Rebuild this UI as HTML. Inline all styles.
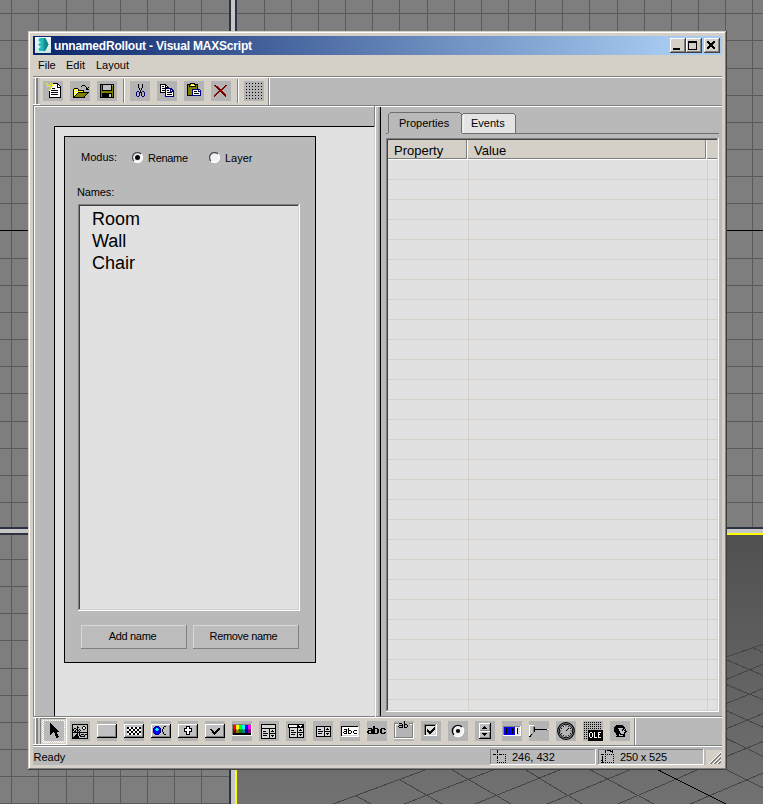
<!DOCTYPE html>
<html><head><meta charset="utf-8"><style>
html,body{margin:0;padding:0;}
body{width:763px;height:804px;overflow:hidden;position:relative;font-family:"Liberation Sans",sans-serif;}
body div{position:absolute;}
.t{white-space:nowrap;line-height:1;}
</style></head><body>
<svg width="763" height="804" style="position:absolute;left:0;top:0" shape-rendering="crispEdges">
<rect x="0" y="0" width="763" height="804" fill="#7e7e7e"/>
<rect x="11" y="0" width="1" height="527" fill="#5a5a5a"/>
<rect x="38" y="0" width="1" height="527" fill="#5a5a5a"/>
<rect x="66" y="0" width="1" height="527" fill="#5a5a5a"/>
<rect x="93" y="0" width="1" height="527" fill="#5a5a5a"/>
<rect x="120" y="0" width="1" height="527" fill="#5a5a5a"/>
<rect x="147" y="0" width="1" height="527" fill="#5a5a5a"/>
<rect x="174" y="0" width="1" height="527" fill="#5a5a5a"/>
<rect x="201" y="0" width="1" height="527" fill="#5a5a5a"/>
<rect x="0" y="13" width="229" height="1" fill="#5a5a5a"/>
<rect x="0" y="40" width="229" height="1" fill="#5a5a5a"/>
<rect x="0" y="68" width="229" height="1" fill="#5a5a5a"/>
<rect x="0" y="95" width="229" height="1" fill="#5a5a5a"/>
<rect x="0" y="122" width="229" height="1" fill="#5a5a5a"/>
<rect x="0" y="149" width="229" height="1" fill="#5a5a5a"/>
<rect x="0" y="176" width="229" height="1" fill="#5a5a5a"/>
<rect x="0" y="203" width="229" height="1" fill="#5a5a5a"/>
<rect x="0" y="230" width="229" height="1" fill="#000"/>
<rect x="0" y="258" width="229" height="1" fill="#5a5a5a"/>
<rect x="0" y="285" width="229" height="1" fill="#5a5a5a"/>
<rect x="0" y="312" width="229" height="1" fill="#5a5a5a"/>
<rect x="0" y="339" width="229" height="1" fill="#5a5a5a"/>
<rect x="0" y="366" width="229" height="1" fill="#5a5a5a"/>
<rect x="0" y="393" width="229" height="1" fill="#5a5a5a"/>
<rect x="0" y="421" width="229" height="1" fill="#5a5a5a"/>
<rect x="0" y="448" width="229" height="1" fill="#5a5a5a"/>
<rect x="0" y="475" width="229" height="1" fill="#5a5a5a"/>
<rect x="0" y="502" width="229" height="1" fill="#5a5a5a"/>
<rect x="264" y="0" width="1" height="527" fill="#5a5a5a"/>
<rect x="291" y="0" width="1" height="527" fill="#5a5a5a"/>
<rect x="318" y="0" width="1" height="527" fill="#5a5a5a"/>
<rect x="345" y="0" width="1" height="527" fill="#5a5a5a"/>
<rect x="372" y="0" width="1" height="527" fill="#5a5a5a"/>
<rect x="399" y="0" width="1" height="527" fill="#5a5a5a"/>
<rect x="427" y="0" width="1" height="527" fill="#5a5a5a"/>
<rect x="454" y="0" width="1" height="527" fill="#5a5a5a"/>
<rect x="481" y="0" width="1" height="527" fill="#5a5a5a"/>
<rect x="508" y="0" width="1" height="527" fill="#5a5a5a"/>
<rect x="535" y="0" width="1" height="527" fill="#5a5a5a"/>
<rect x="562" y="0" width="1" height="527" fill="#5a5a5a"/>
<rect x="589" y="0" width="1" height="527" fill="#5a5a5a"/>
<rect x="617" y="0" width="1" height="527" fill="#5a5a5a"/>
<rect x="644" y="0" width="1" height="527" fill="#5a5a5a"/>
<rect x="671" y="0" width="1" height="527" fill="#5a5a5a"/>
<rect x="698" y="0" width="1" height="527" fill="#5a5a5a"/>
<rect x="725" y="0" width="1" height="527" fill="#5a5a5a"/>
<rect x="752" y="0" width="1" height="527" fill="#5a5a5a"/>
<rect x="237" y="13" width="526" height="1" fill="#5a5a5a"/>
<rect x="237" y="40" width="526" height="1" fill="#5a5a5a"/>
<rect x="237" y="68" width="526" height="1" fill="#5a5a5a"/>
<rect x="237" y="95" width="526" height="1" fill="#5a5a5a"/>
<rect x="237" y="122" width="526" height="1" fill="#5a5a5a"/>
<rect x="237" y="149" width="526" height="1" fill="#5a5a5a"/>
<rect x="237" y="176" width="526" height="1" fill="#5a5a5a"/>
<rect x="237" y="203" width="526" height="1" fill="#5a5a5a"/>
<rect x="237" y="230" width="526" height="1" fill="#000"/>
<rect x="237" y="258" width="526" height="1" fill="#5a5a5a"/>
<rect x="237" y="285" width="526" height="1" fill="#5a5a5a"/>
<rect x="237" y="312" width="526" height="1" fill="#5a5a5a"/>
<rect x="237" y="339" width="526" height="1" fill="#5a5a5a"/>
<rect x="237" y="366" width="526" height="1" fill="#5a5a5a"/>
<rect x="237" y="393" width="526" height="1" fill="#5a5a5a"/>
<rect x="237" y="421" width="526" height="1" fill="#5a5a5a"/>
<rect x="237" y="448" width="526" height="1" fill="#5a5a5a"/>
<rect x="237" y="475" width="526" height="1" fill="#5a5a5a"/>
<rect x="237" y="502" width="526" height="1" fill="#5a5a5a"/>
<rect x="11" y="535" width="1" height="269" fill="#5a5a5a"/>
<rect x="38" y="535" width="1" height="269" fill="#5a5a5a"/>
<rect x="66" y="535" width="1" height="269" fill="#5a5a5a"/>
<rect x="93" y="535" width="1" height="269" fill="#5a5a5a"/>
<rect x="120" y="535" width="1" height="269" fill="#5a5a5a"/>
<rect x="147" y="535" width="1" height="269" fill="#5a5a5a"/>
<rect x="174" y="535" width="1" height="269" fill="#5a5a5a"/>
<rect x="201" y="535" width="1" height="269" fill="#5a5a5a"/>
<rect x="0" y="559" width="229" height="1" fill="#5a5a5a"/>
<rect x="0" y="586" width="229" height="1" fill="#5a5a5a"/>
<rect x="0" y="613" width="229" height="1" fill="#5a5a5a"/>
<rect x="0" y="640" width="229" height="1" fill="#5a5a5a"/>
<rect x="0" y="668" width="229" height="1" fill="#5a5a5a"/>
<rect x="0" y="695" width="229" height="1" fill="#5a5a5a"/>
<rect x="0" y="722" width="229" height="1" fill="#5a5a5a"/>
<rect x="0" y="749" width="229" height="1" fill="#5a5a5a"/>
<rect x="0" y="776" width="229" height="1" fill="#5a5a5a"/>
<rect x="0" y="803" width="229" height="1" fill="#5a5a5a"/>
<defs><linearGradient id="pg" x1="0" y1="0" x2="0" y2="1"><stop offset="0" stop-color="#505050"/><stop offset="1" stop-color="#727272"/></linearGradient></defs>
<rect x="237" y="535" width="526" height="269" fill="url(#pg)"/>
</svg>
<svg width="763" height="804" style="position:absolute;left:0;top:0">
<line x1="333.2" y1="804" x2="425.1" y2="770" stroke="#454545" stroke-width="1" shape-rendering="crispEdges"/>
<line x1="404" y1="804" x2="493" y2="770" stroke="#454545" stroke-width="1" shape-rendering="crispEdges"/>
<line x1="474.9" y1="804" x2="562" y2="769" stroke="#454545" stroke-width="1" shape-rendering="crispEdges"/>
<line x1="547.4" y1="804" x2="629.6" y2="770" stroke="#454545" stroke-width="1" shape-rendering="crispEdges"/>
<line x1="618" y1="804" x2="697.3" y2="770" stroke="#454545" stroke-width="1" shape-rendering="crispEdges"/>
<line x1="690.1" y1="804" x2="763" y2="773" stroke="#454545" stroke-width="1" shape-rendering="crispEdges"/>
<line x1="727" y1="656.7" x2="763" y2="644.3" stroke="#454545" stroke-width="1" shape-rendering="crispEdges"/>
<line x1="727" y1="679.2" x2="763" y2="664.2" stroke="#454545" stroke-width="1" shape-rendering="crispEdges"/>
<line x1="727" y1="703.4" x2="763" y2="688.5" stroke="#454545" stroke-width="1" shape-rendering="crispEdges"/>
<line x1="727" y1="728.5" x2="763" y2="713.6" stroke="#454545" stroke-width="1" shape-rendering="crispEdges"/>
<line x1="727" y1="756.3" x2="763" y2="741.4" stroke="#454545" stroke-width="1" shape-rendering="crispEdges"/>
<line x1="355.8" y1="795.6" x2="370.8" y2="804" stroke="#454545" stroke-width="1" shape-rendering="crispEdges"/>
<line x1="399.5" y1="779.5" x2="441.7" y2="804" stroke="#454545" stroke-width="1" shape-rendering="crispEdges"/>
<line x1="452.2" y1="770" x2="511" y2="804" stroke="#454545" stroke-width="1" shape-rendering="crispEdges"/>
<line x1="525.8" y1="770" x2="582" y2="804" stroke="#454545" stroke-width="1" shape-rendering="crispEdges"/>
<line x1="590.6" y1="770" x2="654" y2="804" stroke="#454545" stroke-width="1" shape-rendering="crispEdges"/>
<line x1="727" y1="770" x2="763" y2="788" stroke="#454545" stroke-width="1" shape-rendering="crispEdges"/>
<line x1="727" y1="659.9" x2="763" y2="675.4" stroke="#454545" stroke-width="1" shape-rendering="crispEdges"/>
<line x1="727" y1="684.8" x2="763" y2="699.7" stroke="#454545" stroke-width="1" shape-rendering="crispEdges"/>
<line x1="727" y1="711" x2="763" y2="727.2" stroke="#454545" stroke-width="1" shape-rendering="crispEdges"/>
<line x1="727" y1="738.8" x2="763" y2="756.3" stroke="#454545" stroke-width="1" shape-rendering="crispEdges"/>
<line x1="752" y1="647.5" x2="763" y2="652.3" stroke="#454545" stroke-width="1" shape-rendering="crispEdges"/>
<line x1="658.4" y1="770" x2="726.2" y2="804" stroke="#000" stroke-width="1" shape-rendering="crispEdges"/>
</svg>
<div style="left:229px;top:0px;width:2px;height:804px;background:#2b3342;"></div>
<div style="left:231px;top:0px;width:4px;height:804px;background:#c6c6c6;"></div>
<div style="left:235px;top:0px;width:2px;height:535px;background:#2b3342;"></div>
<div style="left:0px;top:527px;width:763px;height:2px;background:#2b3342;"></div>
<div style="left:0px;top:529px;width:763px;height:4px;background:#c6c6c6;"></div>
<div style="left:0px;top:533px;width:231px;height:2px;background:#2b3342;"></div>
<div style="left:237px;top:533px;width:526px;height:2px;background:#ffff00;"></div>
<div style="left:235px;top:533px;width:2px;height:271px;background:#ffff00;"></div>
<div style="left:28px;top:31px;width:699px;height:739px;background:#d4d0c8;"></div>
<div style="left:29px;top:32px;width:696px;height:1px;background:#fff;"></div>
<div style="left:29px;top:32px;width:1px;height:736px;background:#fff;"></div>
<div style="left:725px;top:32px;width:1px;height:737px;background:#808080;"></div>
<div style="left:726px;top:31px;width:1px;height:739px;background:#404040;"></div>
<div style="left:29px;top:768px;width:697px;height:1px;background:#808080;"></div>
<div style="left:28px;top:769px;width:699px;height:1px;background:#404040;"></div>
<div style="left:33px;top:36px;width:689px;height:19px;background:;background:linear-gradient(to right,#0a246a 0px,#a6caf0 637px)"></div>
<svg style="position:absolute;left:35px;top:37px" width="16" height="16"><defs><linearGradient id="ig" x1="0" y1="0" x2="0" y2="1"><stop offset="0" stop-color="#f2f8f8"/><stop offset="0.8" stop-color="#d8ecec"/><stop offset="1" stop-color="#bfe6e2"/></linearGradient><linearGradient id="ic" x1="0" y1="0" x2="1" y2="0"><stop offset="0" stop-color="#22c4c4"/><stop offset="0.45" stop-color="#1ab4b4"/><stop offset="0.6" stop-color="#0f8f8f"/><stop offset="1" stop-color="#0c8080"/></linearGradient></defs><rect width="16" height="16" fill="url(#ig)"/><path d="M3.6 2.6 Q3.6 1 5.2 1 L10.6 1 L13.6 7.5 L10.2 14 L5.2 14 Q3.6 14 3.6 12.4 L3.6 11.6 L6.1 9.8 L3.6 8.6 L3.6 6.6 L6.1 5.6 L3.6 4.2 Z" fill="url(#ic)"/></svg>
<div class="t" style="left:54px;top:39.84px;font-size:12px;color:#fff;font-weight:700;letter-spacing:-0.2px">unnamedRollout - Visual MAXScript</div>
<div style="left:670px;top:38px;width:16px;height:15px;background:#d4d0c8;box-shadow:inset -1px -1px #404040, inset 1px 1px #fff, inset -2px -2px #808080"></div><div style="left:673px;top:48px;width:7px;height:2px;background:#000;"></div>
<div style="left:686px;top:38px;width:16px;height:15px;background:#d4d0c8;box-shadow:inset -1px -1px #404040, inset 1px 1px #fff, inset -2px -2px #808080"></div><div style="left:688px;top:41px;width:9px;height:9px;box-sizing:border-box;border:1px solid #000;border-top-width:2px"></div>
<div style="left:704px;top:38px;width:16px;height:15px;background:#d4d0c8;box-shadow:inset -1px -1px #404040, inset 1px 1px #fff, inset -2px -2px #808080"></div><svg style="position:absolute;left:707px;top:41px" width="8" height="8" shape-rendering="crispEdges"><rect x="0" y="0" width="2" height="1" fill="#000000"/><rect x="6" y="0" width="2" height="1" fill="#000000"/><rect x="0" y="1" width="3" height="1" fill="#000000"/><rect x="5" y="1" width="3" height="1" fill="#000000"/><rect x="1" y="2" width="6" height="1" fill="#000000"/><rect x="2" y="3" width="4" height="1" fill="#000000"/><rect x="2" y="4" width="4" height="1" fill="#000000"/><rect x="1" y="5" width="6" height="1" fill="#000000"/><rect x="0" y="6" width="3" height="1" fill="#000000"/><rect x="5" y="6" width="3" height="1" fill="#000000"/><rect x="0" y="7" width="2" height="1" fill="#000000"/><rect x="6" y="7" width="2" height="1" fill="#000000"/></svg>
<div class="t" style="left:38px;top:59.69px;font-size:11px;color:#000;font-weight:400;">File</div>
<div class="t" style="left:66px;top:59.69px;font-size:11px;color:#000;font-weight:400;">Edit</div>
<div class="t" style="left:96px;top:59.69px;font-size:11px;color:#000;font-weight:400;">Layout</div>
<div style="left:33px;top:76px;width:689px;height:1px;background:#808080;"></div>
<div style="left:33px;top:77px;width:689px;height:1px;background:#fff;"></div>
<div style="left:270px;top:78px;width:452px;height:27px;background:#b9b9b9;"></div>
<div style="left:268px;top:78px;width:1px;height:27px;background:#808080;"></div>
<div style="left:269px;top:78px;width:1px;height:27px;background:#fff;"></div>
<div style="left:33px;top:78px;width:2px;height:26px;background:#b8b8b8;"></div>
<div style="left:35px;top:78px;width:1px;height:26px;background:#fff;"></div>
<div style="left:36px;top:78px;width:2px;height:26px;background:#808080;"></div>
<div style="left:38px;top:78px;width:2px;height:26px;background:#c4c4c4;"></div>
<div style="left:33px;top:104px;width:7px;height:1px;background:#fff;"></div>
<div style="left:43px;top:81px;width:20px;height:20px;background:#b4b4b4;"></div>
<svg style="position:absolute;left:43px;top:81px" width="20" height="20" shape-rendering="crispEdges"><rect x="3" y="2" width="1" height="1" fill="#ffff00"/><rect x="7" y="2" width="1" height="1" fill="#ffff00"/><rect x="10" y="2" width="5" height="1" fill="#000000"/><rect x="4" y="3" width="1" height="1" fill="#ffff00"/><rect x="9" y="3" width="1" height="1" fill="#ffff00"/><rect x="10" y="3" width="4" height="1" fill="#ffffff"/><rect x="14" y="3" width="2" height="1" fill="#000000"/><rect x="5" y="4" width="1" height="1" fill="#ffff00"/><rect x="7" y="4" width="1" height="1" fill="#ffff00"/><rect x="9" y="4" width="1" height="1" fill="#ffff00"/><rect x="10" y="4" width="4" height="1" fill="#ffffff"/><rect x="14" y="4" width="1" height="1" fill="#000000"/><rect x="15" y="4" width="1" height="1" fill="#ffffff"/><rect x="16" y="4" width="1" height="1" fill="#000000"/><rect x="4" y="5" width="1" height="1" fill="#ffff00"/><rect x="6" y="5" width="1" height="1" fill="#ffff00"/><rect x="9" y="5" width="5" height="1" fill="#ffffff"/><rect x="14" y="5" width="1" height="1" fill="#000000"/><rect x="15" y="5" width="2" height="1" fill="#ffffff"/><rect x="17" y="5" width="1" height="1" fill="#000000"/><rect x="7" y="6" width="2" height="1" fill="#ffff00"/><rect x="9" y="6" width="5" height="1" fill="#ffffff"/><rect x="14" y="6" width="4" height="1" fill="#000000"/><rect x="8" y="7" width="1" height="1" fill="#ffffff"/><rect x="9" y="7" width="3" height="1" fill="#000000"/><rect x="12" y="7" width="5" height="1" fill="#ffffff"/><rect x="17" y="7" width="1" height="1" fill="#000000"/><rect x="7" y="8" width="1" height="1" fill="#ffff00"/><rect x="8" y="8" width="9" height="1" fill="#ffffff"/><rect x="17" y="8" width="1" height="1" fill="#000000"/><rect x="6" y="9" width="2" height="1" fill="#ffffff"/><rect x="8" y="9" width="7" height="1" fill="#000000"/><rect x="15" y="9" width="2" height="1" fill="#ffffff"/><rect x="17" y="9" width="1" height="1" fill="#000000"/><rect x="6" y="10" width="1" height="1" fill="#000000"/><rect x="7" y="10" width="10" height="1" fill="#ffffff"/><rect x="17" y="10" width="1" height="1" fill="#000000"/><rect x="6" y="11" width="1" height="1" fill="#000000"/><rect x="7" y="11" width="1" height="1" fill="#ffffff"/><rect x="8" y="11" width="7" height="1" fill="#000000"/><rect x="15" y="11" width="2" height="1" fill="#ffffff"/><rect x="17" y="11" width="1" height="1" fill="#000000"/><rect x="6" y="12" width="1" height="1" fill="#000000"/><rect x="7" y="12" width="10" height="1" fill="#ffffff"/><rect x="17" y="12" width="1" height="1" fill="#000000"/><rect x="6" y="13" width="1" height="1" fill="#000000"/><rect x="7" y="13" width="1" height="1" fill="#ffffff"/><rect x="8" y="13" width="7" height="1" fill="#000000"/><rect x="15" y="13" width="2" height="1" fill="#ffffff"/><rect x="17" y="13" width="1" height="1" fill="#000000"/><rect x="6" y="14" width="1" height="1" fill="#000000"/><rect x="7" y="14" width="10" height="1" fill="#ffffff"/><rect x="17" y="14" width="1" height="1" fill="#000000"/><rect x="6" y="15" width="1" height="1" fill="#000000"/><rect x="7" y="15" width="10" height="1" fill="#ffffff"/><rect x="17" y="15" width="1" height="1" fill="#000000"/><rect x="6" y="16" width="12" height="1" fill="#000000"/></svg>
<div style="left:70px;top:81px;width:20px;height:20px;background:#b4b4b4;"></div>
<svg style="position:absolute;left:70px;top:81px" width="20" height="20" shape-rendering="crispEdges"><rect x="12" y="4" width="3" height="1" fill="#000000"/><rect x="11" y="5" width="1" height="1" fill="#000000"/><rect x="15" y="5" width="1" height="1" fill="#000000"/><rect x="16" y="6" width="1" height="1" fill="#000000"/><rect x="18" y="6" width="1" height="1" fill="#000000"/><rect x="4" y="7" width="4" height="1" fill="#000000"/><rect x="16" y="7" width="2" height="1" fill="#000000"/><rect x="3" y="8" width="1" height="1" fill="#000000"/><rect x="4" y="8" width="1" height="1" fill="#ffff00"/><rect x="5" y="8" width="1" height="1" fill="#ffffff"/><rect x="6" y="8" width="1" height="1" fill="#ffff00"/><rect x="7" y="8" width="1" height="1" fill="#ffffff"/><rect x="8" y="8" width="1" height="1" fill="#000000"/><rect x="16" y="8" width="3" height="1" fill="#000000"/><rect x="3" y="9" width="1" height="1" fill="#000000"/><rect x="4" y="9" width="1" height="1" fill="#ffffff"/><rect x="5" y="9" width="1" height="1" fill="#ffff00"/><rect x="6" y="9" width="1" height="1" fill="#ffffff"/><rect x="7" y="9" width="1" height="1" fill="#ffff00"/><rect x="8" y="9" width="6" height="1" fill="#000000"/><rect x="3" y="10" width="1" height="1" fill="#000000"/><rect x="4" y="10" width="1" height="1" fill="#ffff00"/><rect x="5" y="10" width="1" height="1" fill="#ffffff"/><rect x="6" y="10" width="1" height="1" fill="#ffff00"/><rect x="7" y="10" width="1" height="1" fill="#ffffff"/><rect x="8" y="10" width="1" height="1" fill="#ffff00"/><rect x="9" y="10" width="1" height="1" fill="#ffffff"/><rect x="10" y="10" width="1" height="1" fill="#ffff00"/><rect x="11" y="10" width="1" height="1" fill="#ffffff"/><rect x="12" y="10" width="1" height="1" fill="#ffff00"/><rect x="13" y="10" width="1" height="1" fill="#000000"/><rect x="3" y="11" width="1" height="1" fill="#000000"/><rect x="4" y="11" width="1" height="1" fill="#ffffff"/><rect x="5" y="11" width="1" height="1" fill="#ffff00"/><rect x="6" y="11" width="1" height="1" fill="#ffffff"/><rect x="7" y="11" width="1" height="1" fill="#ffff00"/><rect x="8" y="11" width="11" height="1" fill="#000000"/><rect x="3" y="12" width="1" height="1" fill="#000000"/><rect x="4" y="12" width="1" height="1" fill="#ffff00"/><rect x="5" y="12" width="1" height="1" fill="#ffffff"/><rect x="6" y="12" width="1" height="1" fill="#ffff00"/><rect x="7" y="12" width="1" height="1" fill="#000000"/><rect x="8" y="12" width="9" height="1" fill="#808000"/><rect x="17" y="12" width="1" height="1" fill="#000000"/><rect x="3" y="13" width="1" height="1" fill="#000000"/><rect x="4" y="13" width="1" height="1" fill="#ffffff"/><rect x="5" y="13" width="1" height="1" fill="#ffff00"/><rect x="6" y="13" width="1" height="1" fill="#000000"/><rect x="7" y="13" width="9" height="1" fill="#808000"/><rect x="16" y="13" width="1" height="1" fill="#000000"/><rect x="3" y="14" width="1" height="1" fill="#000000"/><rect x="4" y="14" width="1" height="1" fill="#ffff00"/><rect x="5" y="14" width="1" height="1" fill="#000000"/><rect x="6" y="14" width="9" height="1" fill="#808000"/><rect x="15" y="14" width="1" height="1" fill="#000000"/><rect x="3" y="15" width="2" height="1" fill="#000000"/><rect x="5" y="15" width="9" height="1" fill="#808000"/><rect x="14" y="15" width="1" height="1" fill="#000000"/><rect x="3" y="16" width="12" height="1" fill="#000000"/></svg>
<div style="left:97px;top:81px;width:20px;height:20px;background:#b4b4b4;"></div>
<svg style="position:absolute;left:97px;top:81px" width="20" height="20" shape-rendering="crispEdges"><rect x="3" y="3" width="14" height="1" fill="#000000"/><rect x="3" y="4" width="1" height="1" fill="#000000"/><rect x="4" y="4" width="1" height="1" fill="#808000"/><rect x="5" y="4" width="1" height="1" fill="#000000"/><rect x="6" y="4" width="8" height="1" fill="#c0c0c0"/><rect x="14" y="4" width="1" height="1" fill="#000000"/><rect x="15" y="4" width="1" height="1" fill="#c0c0c0"/><rect x="16" y="4" width="1" height="1" fill="#000000"/><rect x="3" y="5" width="1" height="1" fill="#000000"/><rect x="4" y="5" width="1" height="1" fill="#808000"/><rect x="5" y="5" width="1" height="1" fill="#000000"/><rect x="6" y="5" width="8" height="1" fill="#c0c0c0"/><rect x="14" y="5" width="1" height="1" fill="#000000"/><rect x="15" y="5" width="1" height="1" fill="#808000"/><rect x="16" y="5" width="1" height="1" fill="#000000"/><rect x="3" y="6" width="1" height="1" fill="#000000"/><rect x="4" y="6" width="1" height="1" fill="#808000"/><rect x="5" y="6" width="1" height="1" fill="#000000"/><rect x="6" y="6" width="8" height="1" fill="#c0c0c0"/><rect x="14" y="6" width="1" height="1" fill="#000000"/><rect x="15" y="6" width="1" height="1" fill="#808000"/><rect x="16" y="6" width="1" height="1" fill="#000000"/><rect x="3" y="7" width="1" height="1" fill="#000000"/><rect x="4" y="7" width="1" height="1" fill="#808000"/><rect x="5" y="7" width="1" height="1" fill="#000000"/><rect x="6" y="7" width="8" height="1" fill="#c0c0c0"/><rect x="14" y="7" width="1" height="1" fill="#000000"/><rect x="15" y="7" width="1" height="1" fill="#808000"/><rect x="16" y="7" width="1" height="1" fill="#000000"/><rect x="3" y="8" width="1" height="1" fill="#000000"/><rect x="4" y="8" width="1" height="1" fill="#808000"/><rect x="5" y="8" width="1" height="1" fill="#000000"/><rect x="6" y="8" width="8" height="1" fill="#c0c0c0"/><rect x="14" y="8" width="1" height="1" fill="#000000"/><rect x="15" y="8" width="1" height="1" fill="#808000"/><rect x="16" y="8" width="1" height="1" fill="#000000"/><rect x="3" y="9" width="1" height="1" fill="#000000"/><rect x="4" y="9" width="1" height="1" fill="#808000"/><rect x="5" y="9" width="10" height="1" fill="#000000"/><rect x="15" y="9" width="1" height="1" fill="#808000"/><rect x="16" y="9" width="1" height="1" fill="#000000"/><rect x="3" y="10" width="1" height="1" fill="#000000"/><rect x="4" y="10" width="12" height="1" fill="#808000"/><rect x="16" y="10" width="1" height="1" fill="#000000"/><rect x="3" y="11" width="1" height="1" fill="#000000"/><rect x="4" y="11" width="12" height="1" fill="#808000"/><rect x="16" y="11" width="1" height="1" fill="#000000"/><rect x="3" y="12" width="1" height="1" fill="#000000"/><rect x="4" y="12" width="1" height="1" fill="#808000"/><rect x="5" y="12" width="10" height="1" fill="#000000"/><rect x="15" y="12" width="1" height="1" fill="#808000"/><rect x="16" y="12" width="1" height="1" fill="#000000"/><rect x="3" y="13" width="1" height="1" fill="#000000"/><rect x="4" y="13" width="1" height="1" fill="#808000"/><rect x="5" y="13" width="7" height="1" fill="#000000"/><rect x="12" y="13" width="2" height="1" fill="#c0c0c0"/><rect x="14" y="13" width="1" height="1" fill="#000000"/><rect x="15" y="13" width="1" height="1" fill="#808000"/><rect x="16" y="13" width="1" height="1" fill="#000000"/><rect x="3" y="14" width="1" height="1" fill="#000000"/><rect x="4" y="14" width="1" height="1" fill="#808000"/><rect x="5" y="14" width="7" height="1" fill="#000000"/><rect x="12" y="14" width="2" height="1" fill="#c0c0c0"/><rect x="14" y="14" width="1" height="1" fill="#000000"/><rect x="15" y="14" width="1" height="1" fill="#808000"/><rect x="16" y="14" width="1" height="1" fill="#000000"/><rect x="3" y="15" width="1" height="1" fill="#000000"/><rect x="4" y="15" width="1" height="1" fill="#808000"/><rect x="5" y="15" width="7" height="1" fill="#000000"/><rect x="12" y="15" width="2" height="1" fill="#c0c0c0"/><rect x="14" y="15" width="1" height="1" fill="#000000"/><rect x="15" y="15" width="1" height="1" fill="#808000"/><rect x="16" y="15" width="1" height="1" fill="#000000"/><rect x="3" y="16" width="14" height="1" fill="#000000"/></svg>
<div style="left:130px;top:81px;width:20px;height:20px;background:#b4b4b4;"></div>
<svg style="position:absolute;left:130px;top:81px" width="20" height="20" shape-rendering="crispEdges"><rect x="8" y="3" width="1" height="1" fill="#000000"/><rect x="12" y="3" width="1" height="1" fill="#000000"/><rect x="8" y="4" width="1" height="1" fill="#000000"/><rect x="12" y="4" width="1" height="1" fill="#000000"/><rect x="8" y="5" width="1" height="1" fill="#000000"/><rect x="12" y="5" width="1" height="1" fill="#000000"/><rect x="8" y="6" width="1" height="1" fill="#000000"/><rect x="12" y="6" width="1" height="1" fill="#000000"/><rect x="9" y="7" width="1" height="1" fill="#000000"/><rect x="11" y="7" width="1" height="1" fill="#000000"/><rect x="9" y="8" width="1" height="1" fill="#000000"/><rect x="11" y="8" width="1" height="1" fill="#000000"/><rect x="10" y="9" width="1" height="1" fill="#000000"/><rect x="7" y="10" width="2" height="1" fill="#000080"/><rect x="10" y="10" width="1" height="1" fill="#000000"/><rect x="12" y="10" width="2" height="1" fill="#000080"/><rect x="6" y="11" width="1" height="1" fill="#000080"/><rect x="9" y="11" width="1" height="1" fill="#000080"/><rect x="10" y="11" width="1" height="1" fill="#000000"/><rect x="11" y="11" width="1" height="1" fill="#000080"/><rect x="14" y="11" width="1" height="1" fill="#000080"/><rect x="6" y="12" width="1" height="1" fill="#000080"/><rect x="9" y="12" width="1" height="1" fill="#000080"/><rect x="11" y="12" width="1" height="1" fill="#000080"/><rect x="14" y="12" width="1" height="1" fill="#000080"/><rect x="6" y="13" width="1" height="1" fill="#000080"/><rect x="9" y="13" width="1" height="1" fill="#000080"/><rect x="11" y="13" width="1" height="1" fill="#000080"/><rect x="14" y="13" width="1" height="1" fill="#000080"/><rect x="6" y="14" width="1" height="1" fill="#000080"/><rect x="9" y="14" width="1" height="1" fill="#000080"/><rect x="11" y="14" width="1" height="1" fill="#000080"/><rect x="14" y="14" width="1" height="1" fill="#000080"/><rect x="7" y="15" width="2" height="1" fill="#000080"/><rect x="12" y="15" width="2" height="1" fill="#000080"/></svg>
<div style="left:157px;top:81px;width:20px;height:20px;background:#b4b4b4;"></div>
<svg style="position:absolute;left:157px;top:81px" width="20" height="20" shape-rendering="crispEdges"><rect x="3" y="3" width="6" height="1" fill="#000000"/><rect x="3" y="4" width="1" height="1" fill="#000000"/><rect x="4" y="4" width="4" height="1" fill="#ffffff"/><rect x="8" y="4" width="2" height="1" fill="#000000"/><rect x="3" y="5" width="1" height="1" fill="#000000"/><rect x="4" y="5" width="1" height="1" fill="#ffffff"/><rect x="5" y="5" width="2" height="1" fill="#000000"/><rect x="7" y="5" width="1" height="1" fill="#ffffff"/><rect x="8" y="5" width="1" height="1" fill="#000000"/><rect x="9" y="5" width="1" height="1" fill="#ffffff"/><rect x="10" y="5" width="1" height="1" fill="#000000"/><rect x="3" y="6" width="1" height="1" fill="#000000"/><rect x="4" y="6" width="4" height="1" fill="#ffffff"/><rect x="8" y="6" width="4" height="1" fill="#000000"/><rect x="3" y="7" width="1" height="1" fill="#000000"/><rect x="4" y="7" width="1" height="1" fill="#ffffff"/><rect x="5" y="7" width="4" height="1" fill="#000000"/><rect x="9" y="7" width="6" height="1" fill="#000080"/><rect x="3" y="8" width="1" height="1" fill="#000000"/><rect x="4" y="8" width="4" height="1" fill="#ffffff"/><rect x="8" y="8" width="1" height="1" fill="#000080"/><rect x="9" y="8" width="4" height="1" fill="#ffffff"/><rect x="13" y="8" width="3" height="1" fill="#000080"/><rect x="3" y="9" width="1" height="1" fill="#000000"/><rect x="4" y="9" width="1" height="1" fill="#ffffff"/><rect x="5" y="9" width="3" height="1" fill="#000000"/><rect x="8" y="9" width="1" height="1" fill="#000080"/><rect x="9" y="9" width="1" height="1" fill="#ffffff"/><rect x="10" y="9" width="2" height="1" fill="#000000"/><rect x="12" y="9" width="1" height="1" fill="#ffffff"/><rect x="13" y="9" width="1" height="1" fill="#000080"/><rect x="14" y="9" width="1" height="1" fill="#ffffff"/><rect x="15" y="9" width="2" height="1" fill="#000080"/><rect x="3" y="10" width="1" height="1" fill="#000000"/><rect x="4" y="10" width="4" height="1" fill="#ffffff"/><rect x="8" y="10" width="1" height="1" fill="#000080"/><rect x="9" y="10" width="4" height="1" fill="#ffffff"/><rect x="13" y="10" width="4" height="1" fill="#000080"/><rect x="3" y="11" width="5" height="1" fill="#000000"/><rect x="8" y="11" width="1" height="1" fill="#000080"/><rect x="9" y="11" width="1" height="1" fill="#ffffff"/><rect x="10" y="11" width="5" height="1" fill="#000000"/><rect x="15" y="11" width="1" height="1" fill="#ffffff"/><rect x="16" y="11" width="1" height="1" fill="#000080"/><rect x="8" y="12" width="1" height="1" fill="#000080"/><rect x="9" y="12" width="7" height="1" fill="#ffffff"/><rect x="16" y="12" width="1" height="1" fill="#000080"/><rect x="8" y="13" width="1" height="1" fill="#000080"/><rect x="9" y="13" width="1" height="1" fill="#ffffff"/><rect x="10" y="13" width="5" height="1" fill="#000000"/><rect x="15" y="13" width="1" height="1" fill="#ffffff"/><rect x="16" y="13" width="1" height="1" fill="#000080"/><rect x="8" y="14" width="1" height="1" fill="#000080"/><rect x="9" y="14" width="7" height="1" fill="#ffffff"/><rect x="16" y="14" width="1" height="1" fill="#000080"/><rect x="8" y="15" width="9" height="1" fill="#000080"/></svg>
<div style="left:184px;top:81px;width:20px;height:20px;background:#b4b4b4;"></div>
<svg style="position:absolute;left:184px;top:81px" width="20" height="20" shape-rendering="crispEdges"><rect x="6" y="2" width="5" height="1" fill="#000000"/><rect x="3" y="3" width="4" height="1" fill="#000000"/><rect x="7" y="3" width="3" height="1" fill="#ffff00"/><rect x="10" y="3" width="4" height="1" fill="#000000"/><rect x="3" y="4" width="1" height="1" fill="#000000"/><rect x="4" y="4" width="1" height="1" fill="#808000"/><rect x="5" y="4" width="1" height="1" fill="#000000"/><rect x="6" y="4" width="1" height="1" fill="#ffff00"/><rect x="7" y="4" width="3" height="1" fill="#ffffff"/><rect x="10" y="4" width="1" height="1" fill="#ffff00"/><rect x="11" y="4" width="1" height="1" fill="#000000"/><rect x="12" y="4" width="1" height="1" fill="#808000"/><rect x="13" y="4" width="1" height="1" fill="#000000"/><rect x="3" y="5" width="1" height="1" fill="#000000"/><rect x="4" y="5" width="1" height="1" fill="#808000"/><rect x="5" y="5" width="7" height="1" fill="#000000"/><rect x="12" y="5" width="1" height="1" fill="#808000"/><rect x="13" y="5" width="1" height="1" fill="#000000"/><rect x="3" y="6" width="1" height="1" fill="#000000"/><rect x="4" y="6" width="1" height="1" fill="#808000"/><rect x="5" y="6" width="1" height="1" fill="#808000"/><rect x="6" y="6" width="1" height="1" fill="#808000"/><rect x="7" y="6" width="1" height="1" fill="#808000"/><rect x="8" y="6" width="1" height="1" fill="#808000"/><rect x="9" y="6" width="1" height="1" fill="#808000"/><rect x="10" y="6" width="1" height="1" fill="#808000"/><rect x="11" y="6" width="1" height="1" fill="#808000"/><rect x="12" y="6" width="1" height="1" fill="#808000"/><rect x="13" y="6" width="1" height="1" fill="#000000"/><rect x="3" y="7" width="1" height="1" fill="#000000"/><rect x="4" y="7" width="1" height="1" fill="#808000"/><rect x="5" y="7" width="1" height="1" fill="#808000"/><rect x="6" y="7" width="1" height="1" fill="#808000"/><rect x="7" y="7" width="1" height="1" fill="#808000"/><rect x="8" y="7" width="1" height="1" fill="#808000"/><rect x="9" y="7" width="1" height="1" fill="#808000"/><rect x="10" y="7" width="1" height="1" fill="#808000"/><rect x="11" y="7" width="1" height="1" fill="#808000"/><rect x="12" y="7" width="1" height="1" fill="#808000"/><rect x="13" y="7" width="1" height="1" fill="#000000"/><rect x="3" y="8" width="1" height="1" fill="#000000"/><rect x="4" y="8" width="1" height="1" fill="#808000"/><rect x="5" y="8" width="1" height="1" fill="#808000"/><rect x="6" y="8" width="1" height="1" fill="#808000"/><rect x="7" y="8" width="1" height="1" fill="#808000"/><rect x="8" y="8" width="8" height="1" fill="#000080"/><rect x="3" y="9" width="1" height="1" fill="#000000"/><rect x="4" y="9" width="1" height="1" fill="#808000"/><rect x="5" y="9" width="1" height="1" fill="#808000"/><rect x="6" y="9" width="1" height="1" fill="#808000"/><rect x="7" y="9" width="1" height="1" fill="#808000"/><rect x="8" y="9" width="1" height="1" fill="#000080"/><rect x="9" y="9" width="5" height="1" fill="#ffffff"/><rect x="14" y="9" width="1" height="1" fill="#000080"/><rect x="15" y="9" width="1" height="1" fill="#ffffff"/><rect x="16" y="9" width="1" height="1" fill="#000080"/><rect x="3" y="10" width="1" height="1" fill="#000000"/><rect x="4" y="10" width="1" height="1" fill="#808000"/><rect x="5" y="10" width="1" height="1" fill="#808000"/><rect x="6" y="10" width="1" height="1" fill="#808000"/><rect x="7" y="10" width="1" height="1" fill="#808000"/><rect x="8" y="10" width="1" height="1" fill="#000080"/><rect x="9" y="10" width="1" height="1" fill="#ffffff"/><rect x="10" y="10" width="3" height="1" fill="#000000"/><rect x="13" y="10" width="1" height="1" fill="#ffffff"/><rect x="14" y="10" width="3" height="1" fill="#000080"/><rect x="3" y="11" width="1" height="1" fill="#000000"/><rect x="4" y="11" width="1" height="1" fill="#808000"/><rect x="5" y="11" width="1" height="1" fill="#808000"/><rect x="6" y="11" width="1" height="1" fill="#808000"/><rect x="7" y="11" width="1" height="1" fill="#808000"/><rect x="8" y="11" width="1" height="1" fill="#000080"/><rect x="9" y="11" width="7" height="1" fill="#ffffff"/><rect x="16" y="11" width="1" height="1" fill="#000080"/><rect x="3" y="12" width="1" height="1" fill="#000000"/><rect x="4" y="12" width="1" height="1" fill="#808000"/><rect x="5" y="12" width="1" height="1" fill="#808000"/><rect x="6" y="12" width="1" height="1" fill="#808000"/><rect x="7" y="12" width="1" height="1" fill="#808000"/><rect x="8" y="12" width="1" height="1" fill="#000080"/><rect x="9" y="12" width="1" height="1" fill="#ffffff"/><rect x="10" y="12" width="5" height="1" fill="#000000"/><rect x="15" y="12" width="1" height="1" fill="#ffffff"/><rect x="16" y="12" width="1" height="1" fill="#000080"/><rect x="3" y="13" width="1" height="1" fill="#000000"/><rect x="4" y="13" width="1" height="1" fill="#808000"/><rect x="5" y="13" width="1" height="1" fill="#808000"/><rect x="6" y="13" width="1" height="1" fill="#808000"/><rect x="7" y="13" width="1" height="1" fill="#808000"/><rect x="8" y="13" width="1" height="1" fill="#000080"/><rect x="9" y="13" width="7" height="1" fill="#ffffff"/><rect x="16" y="13" width="1" height="1" fill="#000080"/><rect x="3" y="14" width="5" height="1" fill="#000000"/><rect x="8" y="14" width="9" height="1" fill="#000080"/></svg>
<div style="left:211px;top:81px;width:20px;height:20px;background:#b4b4b4;"></div>
<svg style="position:absolute;left:211px;top:81px" width="20" height="20" shape-rendering="crispEdges"><rect x="3" y="4" width="2" height="1" fill="#800000"/><rect x="14" y="4" width="2" height="1" fill="#800000"/><rect x="4" y="5" width="3" height="1" fill="#800000"/><rect x="13" y="5" width="2" height="1" fill="#800000"/><rect x="5" y="6" width="3" height="1" fill="#800000"/><rect x="12" y="6" width="2" height="1" fill="#800000"/><rect x="6" y="7" width="3" height="1" fill="#800000"/><rect x="11" y="7" width="2" height="1" fill="#800000"/><rect x="7" y="8" width="5" height="1" fill="#800000"/><rect x="8" y="9" width="3" height="1" fill="#800000"/><rect x="7" y="10" width="5" height="1" fill="#800000"/><rect x="6" y="11" width="2" height="1" fill="#800000"/><rect x="10" y="11" width="3" height="1" fill="#800000"/><rect x="5" y="12" width="2" height="1" fill="#800000"/><rect x="11" y="12" width="3" height="1" fill="#800000"/><rect x="4" y="13" width="2" height="1" fill="#800000"/><rect x="12" y="13" width="3" height="1" fill="#800000"/><rect x="3" y="14" width="2" height="1" fill="#800000"/><rect x="13" y="14" width="2" height="1" fill="#800000"/><rect x="3" y="15" width="1" height="1" fill="#800000"/><rect x="14" y="15" width="1" height="1" fill="#800000"/></svg>
<div style="left:244px;top:81px;width:20px;height:20px;background:#b4b4b4;"></div>
<div style="left:123px;top:79px;width:1px;height:24px;background:#808080;"></div>
<div style="left:124px;top:79px;width:1px;height:24px;background:#fff;"></div>
<div style="left:237px;top:79px;width:1px;height:24px;background:#808080;"></div>
<div style="left:238px;top:79px;width:1px;height:24px;background:#fff;"></div>
<svg style="position:absolute;left:244px;top:81px" width="20" height="20" shape-rendering="crispEdges" fill="#000"><rect x="2" y="2" width="1" height="1"/><rect x="2" y="5" width="1" height="1"/><rect x="2" y="8" width="1" height="1"/><rect x="2" y="11" width="1" height="1"/><rect x="2" y="14" width="1" height="1"/><rect x="2" y="17" width="1" height="1"/><rect x="5" y="2" width="1" height="1"/><rect x="5" y="5" width="1" height="1"/><rect x="5" y="8" width="1" height="1"/><rect x="5" y="11" width="1" height="1"/><rect x="5" y="14" width="1" height="1"/><rect x="5" y="17" width="1" height="1"/><rect x="8" y="2" width="1" height="1"/><rect x="8" y="5" width="1" height="1"/><rect x="8" y="8" width="1" height="1"/><rect x="8" y="11" width="1" height="1"/><rect x="8" y="14" width="1" height="1"/><rect x="8" y="17" width="1" height="1"/><rect x="11" y="2" width="1" height="1"/><rect x="11" y="5" width="1" height="1"/><rect x="11" y="8" width="1" height="1"/><rect x="11" y="11" width="1" height="1"/><rect x="11" y="14" width="1" height="1"/><rect x="11" y="17" width="1" height="1"/><rect x="14" y="2" width="1" height="1"/><rect x="14" y="5" width="1" height="1"/><rect x="14" y="8" width="1" height="1"/><rect x="14" y="11" width="1" height="1"/><rect x="14" y="14" width="1" height="1"/><rect x="14" y="17" width="1" height="1"/><rect x="17" y="2" width="1" height="1"/><rect x="17" y="5" width="1" height="1"/><rect x="17" y="8" width="1" height="1"/><rect x="17" y="11" width="1" height="1"/><rect x="17" y="14" width="1" height="1"/><rect x="17" y="17" width="1" height="1"/></svg>
<div style="left:33px;top:105px;width:689px;height:1px;background:#808080;"></div>
<div style="left:34px;top:106px;width:688px;height:1px;background:#fff;"></div>
<div style="left:35px;top:107px;width:339px;height:609px;background:#b9b9b9;"></div>
<div style="left:33px;top:105px;width:1px;height:611px;background:#808080;"></div>
<div style="left:34px;top:106px;width:1px;height:610px;background:#fff;"></div>
<div style="left:374px;top:106px;width:1px;height:21px;background:#808080;"></div>
<div style="left:374px;top:127px;width:1px;height:589px;background:#d4d4d4;"></div>
<div style="left:375px;top:106px;width:1px;height:611px;background:#fff;"></div>
<div style="left:54px;top:126px;width:320px;height:590px;background:#000;"></div>
<div style="left:55px;top:127px;width:319px;height:589px;background:#e1e1e1;"></div>
<div style="left:64px;top:136px;width:252px;height:527px;background:#000;"></div>
<div style="left:65px;top:137px;width:250px;height:525px;background:#b9b9b9;"></div>
<div class="t" style="left:81px;top:151.69px;font-size:11px;color:#000;font-weight:400;">Modus:</div>
<svg style="position:absolute;left:132px;top:152px" width="11" height="11"><circle cx="5.5" cy="5.5" r="5" fill="#f2f2f2"/><path d="M1.96 9.04 A5 5 0 0 1 9.04 1.96" stroke="#4a4e58" stroke-width="1.3" fill="none"/><path d="M9.04 1.96 A5 5 0 0 1 1.96 9.04" stroke="#fff" stroke-width="1.3" fill="none"/><circle cx="5.5" cy="5.5" r="2.5" fill="#000"/></svg>
<div class="t" style="left:148px;top:152.69px;font-size:11px;color:#000;font-weight:400;letter-spacing:-0.3px">Rename</div>
<svg style="position:absolute;left:209px;top:152px" width="11" height="11"><circle cx="5.5" cy="5.5" r="5" fill="#f2f2f2"/><path d="M1.96 9.04 A5 5 0 0 1 9.04 1.96" stroke="#4a4e58" stroke-width="1.3" fill="none"/><path d="M9.04 1.96 A5 5 0 0 1 1.96 9.04" stroke="#fff" stroke-width="1.3" fill="none"/></svg>
<div class="t" style="left:225px;top:152.69px;font-size:11px;color:#000;font-weight:400;">Layer</div>
<div class="t" style="left:77px;top:186.69px;font-size:11px;color:#000;font-weight:400;letter-spacing:-0.13px">Names:</div>
<div style="left:78px;top:204px;width:222px;height:407px;background:#fff;"></div>
<div style="left:78px;top:204px;width:221px;height:406px;background:#808080;"></div>
<div style="left:79px;top:205px;width:220px;height:405px;background:#d4d0c8;"></div>
<div style="left:79px;top:205px;width:219px;height:404px;background:#404040;"></div>
<div style="left:80px;top:206px;width:218px;height:403px;background:#e1e1e1;"></div>
<div class="t" style="left:92px;top:209.76px;font-size:18px;color:#000;font-weight:400;">Room</div>
<div class="t" style="left:92px;top:231.76px;font-size:18px;color:#000;font-weight:400;">Wall</div>
<div class="t" style="left:92px;top:253.76px;font-size:18px;color:#000;font-weight:400;">Chair</div>
<div style="left:81px;top:625px;width:106px;height:24px;background:#bcbcbc;box-shadow:inset -1px -1px #808080, inset 1px 1px #d8d8d8"></div><div class="t" style="left:81px;top:630.69px;font-size:11px;color:#000;font-weight:400;width:106px;text-align:center;letter-spacing:-0.3px;margin-left:-1.5px">Add name</div>
<div style="left:193px;top:625px;width:106px;height:24px;background:#bcbcbc;box-shadow:inset -1px -1px #808080, inset 1px 1px #d8d8d8"></div><div class="t" style="left:193px;top:630.69px;font-size:11px;color:#000;font-weight:400;width:106px;text-align:center;letter-spacing:-0.34px;margin-left:-2.5px">Remove name</div>
<div style="left:376px;top:107px;width:2px;height:610px;background:#c2c2c2;"></div>
<div style="left:378px;top:107px;width:1px;height:610px;background:#b0b0b0;"></div>
<div style="left:379px;top:107px;width:1px;height:610px;background:#989898;"></div>
<div style="left:376px;top:106px;width:4px;height:1px;background:#fff;"></div>
<div style="left:380px;top:107px;width:1px;height:610px;background:#000;"></div>
<div style="left:381px;top:107px;width:341px;height:610px;background:#b9b9b9;"></div>
<div style="left:390px;top:112px;width:70px;height:1px;background:#6e6e6e;"></div>
<div style="left:389px;top:113px;width:1px;height:1px;background:#6e6e6e;"></div>
<div style="left:388px;top:114px;width:1px;height:19px;background:#6e6e6e;"></div>
<div style="left:386px;top:133px;width:2px;height:1px;background:#6e6e6e;"></div>
<div style="left:460px;top:113px;width:1px;height:1px;background:#6e6e6e;"></div>
<div class="t" style="left:399px;top:117.69px;font-size:11px;color:#000;font-weight:400;">Properties</div>
<div style="left:462px;top:114px;width:53px;height:19px;background:#e4e4e4;"></div>
<div style="left:463px;top:114px;width:1px;height:19px;background:#f0f0f0;"></div>
<div style="left:463px;top:113px;width:51px;height:1px;background:#6e6e6e;"></div>
<div style="left:462px;top:114px;width:1px;height:1px;background:#6e6e6e;"></div>
<div style="left:514px;top:114px;width:1px;height:1px;background:#6e6e6e;"></div>
<div style="left:461px;top:114px;width:1px;height:19px;background:#6e6e6e;"></div>
<div style="left:515px;top:115px;width:1px;height:18px;background:#6e6e6e;"></div>
<div style="left:462px;top:133px;width:257px;height:1px;background:#6e6e6e;"></div>
<div class="t" style="left:471px;top:117.69px;font-size:11px;color:#000;font-weight:400;">Events</div>
<div style="left:386px;top:138px;width:333px;height:574px;background:#fff;"></div>
<div style="left:386px;top:138px;width:332px;height:573px;background:#808080;"></div>
<div style="left:387px;top:139px;width:331px;height:572px;background:#d4d0c8;"></div>
<div style="left:387px;top:139px;width:330px;height:571px;background:#404040;"></div>
<div style="left:388px;top:140px;width:329px;height:570px;background:#e1e1e1;"></div>
<div style="left:388px;top:140px;width:329px;height:18px;background:#d4d0c8;"></div>
<div style="left:388px;top:158px;width:329px;height:1px;background:#808080;"></div>
<div style="left:388px;top:159px;width:329px;height:1px;background:#fff;"></div>
<div style="left:466px;top:140px;width:1px;height:19px;background:#808080;"></div>
<div style="left:467px;top:140px;width:1px;height:19px;background:#fff;"></div>
<div style="left:705px;top:140px;width:1px;height:19px;background:#808080;"></div>
<div style="left:706px;top:140px;width:1px;height:19px;background:#fff;"></div>
<div class="t" style="left:394px;top:144.00px;font-size:13px;color:#000;font-weight:400;">Property</div>
<div class="t" style="left:474px;top:144.00px;font-size:13px;color:#000;font-weight:400;">Value</div>
<div style="left:388px;top:179px;width:329px;height:1px;background:#d4d0c8;"></div>
<div style="left:388px;top:199px;width:329px;height:1px;background:#d4d0c8;"></div>
<div style="left:388px;top:219px;width:329px;height:1px;background:#d4d0c8;"></div>
<div style="left:388px;top:239px;width:329px;height:1px;background:#d4d0c8;"></div>
<div style="left:388px;top:259px;width:329px;height:1px;background:#d4d0c8;"></div>
<div style="left:388px;top:279px;width:329px;height:1px;background:#d4d0c8;"></div>
<div style="left:388px;top:299px;width:329px;height:1px;background:#d4d0c8;"></div>
<div style="left:388px;top:319px;width:329px;height:1px;background:#d4d0c8;"></div>
<div style="left:388px;top:339px;width:329px;height:1px;background:#d4d0c8;"></div>
<div style="left:388px;top:359px;width:329px;height:1px;background:#d4d0c8;"></div>
<div style="left:388px;top:379px;width:329px;height:1px;background:#d4d0c8;"></div>
<div style="left:388px;top:399px;width:329px;height:1px;background:#d4d0c8;"></div>
<div style="left:388px;top:419px;width:329px;height:1px;background:#d4d0c8;"></div>
<div style="left:388px;top:439px;width:329px;height:1px;background:#d4d0c8;"></div>
<div style="left:388px;top:459px;width:329px;height:1px;background:#d4d0c8;"></div>
<div style="left:388px;top:479px;width:329px;height:1px;background:#d4d0c8;"></div>
<div style="left:388px;top:499px;width:329px;height:1px;background:#d4d0c8;"></div>
<div style="left:388px;top:519px;width:329px;height:1px;background:#d4d0c8;"></div>
<div style="left:388px;top:539px;width:329px;height:1px;background:#d4d0c8;"></div>
<div style="left:388px;top:559px;width:329px;height:1px;background:#d4d0c8;"></div>
<div style="left:388px;top:579px;width:329px;height:1px;background:#d4d0c8;"></div>
<div style="left:388px;top:599px;width:329px;height:1px;background:#d4d0c8;"></div>
<div style="left:388px;top:619px;width:329px;height:1px;background:#d4d0c8;"></div>
<div style="left:388px;top:639px;width:329px;height:1px;background:#d4d0c8;"></div>
<div style="left:388px;top:659px;width:329px;height:1px;background:#d4d0c8;"></div>
<div style="left:388px;top:679px;width:329px;height:1px;background:#d4d0c8;"></div>
<div style="left:388px;top:699px;width:329px;height:1px;background:#d4d0c8;"></div>
<div style="left:468px;top:160px;width:1px;height:550px;background:#d4d0c8;"></div>
<div style="left:707px;top:160px;width:1px;height:550px;background:#d4d0c8;"></div>
<div style="left:33px;top:716px;width:689px;height:1px;background:#808080;"></div>
<div style="left:375px;top:716px;width:1px;height:1px;background:#fff;"></div>
<div style="left:33px;top:717px;width:689px;height:1px;background:#fff;"></div>
<div style="left:636px;top:718px;width:86px;height:27px;background:#b9b9b9;"></div>
<div style="left:634px;top:718px;width:1px;height:27px;background:#808080;"></div>
<div style="left:635px;top:718px;width:1px;height:27px;background:#fff;"></div>
<div style="left:33px;top:718px;width:2px;height:26px;background:#b8b8b8;"></div>
<div style="left:35px;top:718px;width:1px;height:26px;background:#fff;"></div>
<div style="left:36px;top:718px;width:2px;height:26px;background:#808080;"></div>
<div style="left:38px;top:718px;width:2px;height:26px;background:#c4c4c4;"></div>
<div style="left:33px;top:744px;width:7px;height:1px;background:#fff;"></div>
<div style="left:40px;top:718px;width:27px;height:27px;background:#fff;"></div>
<div style="left:40px;top:718px;width:26px;height:26px;background:#808080;"></div>
<div style="left:41px;top:719px;width:25px;height:25px;background:#d4d0c8;"></div>
<svg style="position:absolute;left:41px;top:719px" width="25" height="25" shape-rendering="crispEdges" fill="#fff"><rect x="2" y="1" width="1" height="1"/><rect x="4" y="1" width="1" height="1"/><rect x="6" y="1" width="1" height="1"/><rect x="8" y="1" width="1" height="1"/><rect x="10" y="1" width="1" height="1"/><rect x="12" y="1" width="1" height="1"/><rect x="14" y="1" width="1" height="1"/><rect x="16" y="1" width="1" height="1"/><rect x="18" y="1" width="1" height="1"/><rect x="20" y="1" width="1" height="1"/><rect x="22" y="1" width="1" height="1"/><rect x="1" y="2" width="1" height="1"/><rect x="23" y="2" width="1" height="1"/><rect x="2" y="3" width="1" height="1"/><rect x="1" y="4" width="1" height="1"/><rect x="23" y="4" width="1" height="1"/><rect x="2" y="5" width="1" height="1"/><rect x="1" y="6" width="1" height="1"/><rect x="23" y="6" width="1" height="1"/><rect x="2" y="7" width="1" height="1"/><rect x="1" y="8" width="1" height="1"/><rect x="23" y="8" width="1" height="1"/><rect x="2" y="9" width="1" height="1"/><rect x="1" y="10" width="1" height="1"/><rect x="23" y="10" width="1" height="1"/><rect x="2" y="11" width="1" height="1"/><rect x="1" y="12" width="1" height="1"/><rect x="23" y="12" width="1" height="1"/><rect x="2" y="13" width="1" height="1"/><rect x="1" y="14" width="1" height="1"/><rect x="23" y="14" width="1" height="1"/><rect x="2" y="15" width="1" height="1"/><rect x="1" y="16" width="1" height="1"/><rect x="23" y="16" width="1" height="1"/><rect x="2" y="17" width="1" height="1"/><rect x="1" y="18" width="1" height="1"/><rect x="23" y="18" width="1" height="1"/><rect x="2" y="19" width="1" height="1"/><rect x="1" y="20" width="1" height="1"/><rect x="23" y="20" width="1" height="1"/><rect x="2" y="21" width="1" height="1"/><rect x="1" y="22" width="1" height="1"/><rect x="3" y="22" width="1" height="1"/><rect x="5" y="22" width="1" height="1"/><rect x="7" y="22" width="1" height="1"/><rect x="9" y="22" width="1" height="1"/><rect x="11" y="22" width="1" height="1"/><rect x="13" y="22" width="1" height="1"/><rect x="15" y="22" width="1" height="1"/><rect x="17" y="22" width="1" height="1"/><rect x="19" y="22" width="1" height="1"/><rect x="21" y="22" width="1" height="1"/><rect x="23" y="22" width="1" height="1"/><rect x="2" y="23" width="1" height="1"/><rect x="4" y="23" width="1" height="1"/><rect x="6" y="23" width="1" height="1"/><rect x="8" y="23" width="1" height="1"/><rect x="10" y="23" width="1" height="1"/><rect x="12" y="23" width="1" height="1"/><rect x="14" y="23" width="1" height="1"/><rect x="16" y="23" width="1" height="1"/><rect x="18" y="23" width="1" height="1"/><rect x="20" y="23" width="1" height="1"/><rect x="22" y="23" width="1" height="1"/></svg>
<div style="left:44px;top:721px;width:20px;height:20px;background:#b9b9b9;"></div>
<svg style="position:absolute;left:50px;top:723px" width="9" height="15" shape-rendering="crispEdges"><rect x="0" y="0" width="1" height="1" fill="#000000"/><rect x="0" y="1" width="2" height="1" fill="#000000"/><rect x="0" y="2" width="3" height="1" fill="#000000"/><rect x="0" y="3" width="4" height="1" fill="#000000"/><rect x="0" y="4" width="5" height="1" fill="#000000"/><rect x="0" y="5" width="6" height="1" fill="#000000"/><rect x="0" y="6" width="7" height="1" fill="#000000"/><rect x="0" y="7" width="8" height="1" fill="#000000"/><rect x="0" y="8" width="9" height="1" fill="#000000"/><rect x="0" y="9" width="3" height="1" fill="#000000"/><rect x="4" y="9" width="3" height="1" fill="#000000"/><rect x="0" y="10" width="2" height="1" fill="#000000"/><rect x="5" y="10" width="2" height="1" fill="#000000"/><rect x="0" y="11" width="1" height="1" fill="#000000"/><rect x="5" y="11" width="3" height="1" fill="#000000"/><rect x="5" y="12" width="3" height="1" fill="#000000"/><rect x="6" y="13" width="3" height="1" fill="#000000"/><rect x="6" y="14" width="2" height="1" fill="#000000"/></svg>
<div style="left:70px;top:721px;width:20px;height:20px;background:#b4b4b4;"></div>
<svg style="position:absolute;left:70px;top:721px" width="20" height="20" shape-rendering="crispEdges"><rect x="2" y="3" width="16" height="1" fill="#000000"/><rect x="2" y="4" width="1" height="1" fill="#000000"/><rect x="3" y="4" width="14" height="1" fill="#c0c0c0"/><rect x="17" y="4" width="1" height="1" fill="#000000"/><rect x="2" y="5" width="1" height="1" fill="#000000"/><rect x="3" y="5" width="4" height="1" fill="#c0c0c0"/><rect x="7" y="5" width="1" height="1" fill="#000000"/><rect x="8" y="5" width="5" height="1" fill="#c0c0c0"/><rect x="13" y="5" width="2" height="1" fill="#000000"/><rect x="15" y="5" width="2" height="1" fill="#c0c0c0"/><rect x="17" y="5" width="1" height="1" fill="#000000"/><rect x="2" y="6" width="1" height="1" fill="#000000"/><rect x="3" y="6" width="4" height="1" fill="#c0c0c0"/><rect x="7" y="6" width="2" height="1" fill="#000000"/><rect x="9" y="6" width="3" height="1" fill="#c0c0c0"/><rect x="12" y="6" width="1" height="1" fill="#000000"/><rect x="13" y="6" width="2" height="1" fill="#ffffff"/><rect x="15" y="6" width="1" height="1" fill="#000000"/><rect x="16" y="6" width="1" height="1" fill="#c0c0c0"/><rect x="17" y="6" width="1" height="1" fill="#000000"/><rect x="2" y="7" width="1" height="1" fill="#000000"/><rect x="3" y="7" width="1" height="1" fill="#c0c0c0"/><rect x="4" y="7" width="2" height="1" fill="#000000"/><rect x="6" y="7" width="1" height="1" fill="#c0c0c0"/><rect x="7" y="7" width="1" height="1" fill="#000000"/><rect x="8" y="7" width="4" height="1" fill="#c0c0c0"/><rect x="12" y="7" width="1" height="1" fill="#000000"/><rect x="13" y="7" width="2" height="1" fill="#ffffff"/><rect x="15" y="7" width="1" height="1" fill="#000000"/><rect x="16" y="7" width="1" height="1" fill="#c0c0c0"/><rect x="17" y="7" width="1" height="1" fill="#000000"/><rect x="2" y="8" width="2" height="1" fill="#000000"/><rect x="4" y="8" width="2" height="1" fill="#c0c0c0"/><rect x="6" y="8" width="2" height="1" fill="#000000"/><rect x="8" y="8" width="1" height="1" fill="#c0c0c0"/><rect x="9" y="8" width="1" height="1" fill="#000000"/><rect x="10" y="8" width="3" height="1" fill="#c0c0c0"/><rect x="13" y="8" width="2" height="1" fill="#000000"/><rect x="15" y="8" width="2" height="1" fill="#c0c0c0"/><rect x="17" y="8" width="1" height="1" fill="#000000"/><rect x="2" y="9" width="2" height="1" fill="#000000"/><rect x="4" y="9" width="1" height="1" fill="#c0c0c0"/><rect x="5" y="9" width="1" height="1" fill="#000000"/><rect x="6" y="9" width="1" height="1" fill="#c0c0c0"/><rect x="7" y="9" width="2" height="1" fill="#000000"/><rect x="9" y="9" width="1" height="1" fill="#c0c0c0"/><rect x="10" y="9" width="1" height="1" fill="#000000"/><rect x="11" y="9" width="6" height="1" fill="#c0c0c0"/><rect x="17" y="9" width="1" height="1" fill="#000000"/><rect x="2" y="10" width="1" height="1" fill="#000000"/><rect x="3" y="10" width="1" height="1" fill="#c0c0c0"/><rect x="4" y="10" width="2" height="1" fill="#000000"/><rect x="6" y="10" width="1" height="1" fill="#c0c0c0"/><rect x="7" y="10" width="1" height="1" fill="#000000"/><rect x="8" y="10" width="1" height="1" fill="#c0c0c0"/><rect x="9" y="10" width="1" height="1" fill="#000000"/><rect x="10" y="10" width="7" height="1" fill="#c0c0c0"/><rect x="17" y="10" width="1" height="1" fill="#000000"/><rect x="2" y="11" width="16" height="1" fill="#000000"/><rect x="2" y="12" width="1" height="1" fill="#000000"/><rect x="3" y="12" width="4" height="1" fill="#c0c0c0"/><rect x="7" y="12" width="1" height="1" fill="#000000"/><rect x="8" y="12" width="1" height="1" fill="#c0c0c0"/><rect x="9" y="12" width="1" height="1" fill="#000000"/><rect x="10" y="12" width="7" height="1" fill="#c0c0c0"/><rect x="17" y="12" width="1" height="1" fill="#000000"/><rect x="2" y="13" width="1" height="1" fill="#000000"/><rect x="3" y="13" width="3" height="1" fill="#c0c0c0"/><rect x="6" y="13" width="2" height="1" fill="#000000"/><rect x="8" y="13" width="1" height="1" fill="#c0c0c0"/><rect x="9" y="13" width="1" height="1" fill="#000000"/><rect x="10" y="13" width="1" height="1" fill="#c0c0c0"/><rect x="11" y="13" width="3" height="1" fill="#000000"/><rect x="14" y="13" width="1" height="1" fill="#c0c0c0"/><rect x="15" y="13" width="3" height="1" fill="#000000"/><rect x="2" y="14" width="1" height="1" fill="#000000"/><rect x="3" y="14" width="2" height="1" fill="#c0c0c0"/><rect x="5" y="14" width="3" height="1" fill="#000000"/><rect x="8" y="14" width="1" height="1" fill="#c0c0c0"/><rect x="9" y="14" width="2" height="1" fill="#000000"/><rect x="11" y="14" width="3" height="1" fill="#c0c0c0"/><rect x="14" y="14" width="1" height="1" fill="#000000"/><rect x="15" y="14" width="2" height="1" fill="#c0c0c0"/><rect x="17" y="14" width="1" height="1" fill="#000000"/><rect x="2" y="15" width="1" height="1" fill="#000000"/><rect x="3" y="15" width="1" height="1" fill="#c0c0c0"/><rect x="4" y="15" width="5" height="1" fill="#000000"/><rect x="9" y="15" width="1" height="1" fill="#c0c0c0"/><rect x="10" y="15" width="5" height="1" fill="#000000"/><rect x="15" y="15" width="2" height="1" fill="#c0c0c0"/><rect x="17" y="15" width="1" height="1" fill="#000000"/><rect x="2" y="16" width="7" height="1" fill="#000000"/><rect x="9" y="16" width="8" height="1" fill="#c0c0c0"/><rect x="17" y="16" width="1" height="1" fill="#000000"/><rect x="2" y="17" width="16" height="1" fill="#000000"/></svg>
<div style="left:97px;top:721px;width:20px;height:20px;background:#b4b4b4;"></div>
<svg style="position:absolute;left:97px;top:721px" width="20" height="20" shape-rendering="crispEdges"><rect x="0" y="3" width="19" height="1" fill="#ffffff"/><rect x="19" y="3" width="1" height="1" fill="#000000"/><rect x="0" y="4" width="1" height="1" fill="#ffffff"/><rect x="1" y="4" width="17" height="1" fill="#c0c0c0"/><rect x="18" y="4" width="1" height="1" fill="#808080"/><rect x="19" y="4" width="1" height="1" fill="#000000"/><rect x="0" y="5" width="1" height="1" fill="#ffffff"/><rect x="1" y="5" width="17" height="1" fill="#c0c0c0"/><rect x="18" y="5" width="1" height="1" fill="#808080"/><rect x="19" y="5" width="1" height="1" fill="#000000"/><rect x="0" y="6" width="1" height="1" fill="#ffffff"/><rect x="1" y="6" width="17" height="1" fill="#c0c0c0"/><rect x="18" y="6" width="1" height="1" fill="#808080"/><rect x="19" y="6" width="1" height="1" fill="#000000"/><rect x="0" y="7" width="1" height="1" fill="#ffffff"/><rect x="1" y="7" width="17" height="1" fill="#c0c0c0"/><rect x="18" y="7" width="1" height="1" fill="#808080"/><rect x="19" y="7" width="1" height="1" fill="#000000"/><rect x="0" y="8" width="1" height="1" fill="#ffffff"/><rect x="1" y="8" width="17" height="1" fill="#c0c0c0"/><rect x="18" y="8" width="1" height="1" fill="#808080"/><rect x="19" y="8" width="1" height="1" fill="#000000"/><rect x="0" y="9" width="1" height="1" fill="#ffffff"/><rect x="1" y="9" width="17" height="1" fill="#c0c0c0"/><rect x="18" y="9" width="1" height="1" fill="#808080"/><rect x="19" y="9" width="1" height="1" fill="#000000"/><rect x="0" y="10" width="1" height="1" fill="#ffffff"/><rect x="1" y="10" width="17" height="1" fill="#c0c0c0"/><rect x="18" y="10" width="1" height="1" fill="#808080"/><rect x="19" y="10" width="1" height="1" fill="#000000"/><rect x="0" y="11" width="1" height="1" fill="#ffffff"/><rect x="1" y="11" width="17" height="1" fill="#c0c0c0"/><rect x="18" y="11" width="1" height="1" fill="#808080"/><rect x="19" y="11" width="1" height="1" fill="#000000"/><rect x="0" y="12" width="1" height="1" fill="#ffffff"/><rect x="1" y="12" width="17" height="1" fill="#c0c0c0"/><rect x="18" y="12" width="1" height="1" fill="#808080"/><rect x="19" y="12" width="1" height="1" fill="#000000"/><rect x="0" y="13" width="1" height="1" fill="#ffffff"/><rect x="1" y="13" width="17" height="1" fill="#c0c0c0"/><rect x="18" y="13" width="1" height="1" fill="#808080"/><rect x="19" y="13" width="1" height="1" fill="#000000"/><rect x="0" y="14" width="1" height="1" fill="#ffffff"/><rect x="1" y="14" width="17" height="1" fill="#c0c0c0"/><rect x="18" y="14" width="1" height="1" fill="#808080"/><rect x="19" y="14" width="1" height="1" fill="#000000"/><rect x="0" y="15" width="1" height="1" fill="#ffffff"/><rect x="1" y="15" width="18" height="1" fill="#808080"/><rect x="19" y="15" width="1" height="1" fill="#000000"/><rect x="0" y="16" width="20" height="1" fill="#000000"/></svg>
<div style="left:124px;top:721px;width:20px;height:20px;background:#b4b4b4;"></div>
<svg style="position:absolute;left:124px;top:721px" width="20" height="20" shape-rendering="crispEdges"><rect x="0" y="3" width="19" height="1" fill="#ffffff"/><rect x="19" y="3" width="1" height="1" fill="#000000"/><rect x="0" y="4" width="1" height="1" fill="#ffffff"/><rect x="1" y="4" width="17" height="1" fill="#c0c0c0"/><rect x="18" y="4" width="1" height="1" fill="#808080"/><rect x="19" y="4" width="1" height="1" fill="#000000"/><rect x="0" y="5" width="1" height="1" fill="#ffffff"/><rect x="1" y="5" width="17" height="1" fill="#c0c0c0"/><rect x="18" y="5" width="1" height="1" fill="#808080"/><rect x="19" y="5" width="1" height="1" fill="#000000"/><rect x="0" y="6" width="1" height="1" fill="#ffffff"/><rect x="1" y="6" width="2" height="1" fill="#c0c0c0"/><rect x="3" y="6" width="2" height="1" fill="#000000"/><rect x="5" y="6" width="2" height="1" fill="#ffffff"/><rect x="7" y="6" width="2" height="1" fill="#000000"/><rect x="9" y="6" width="2" height="1" fill="#ffffff"/><rect x="11" y="6" width="2" height="1" fill="#000000"/><rect x="13" y="6" width="2" height="1" fill="#ffffff"/><rect x="15" y="6" width="2" height="1" fill="#000000"/><rect x="17" y="6" width="1" height="1" fill="#c0c0c0"/><rect x="18" y="6" width="1" height="1" fill="#808080"/><rect x="19" y="6" width="1" height="1" fill="#000000"/><rect x="0" y="7" width="1" height="1" fill="#ffffff"/><rect x="1" y="7" width="2" height="1" fill="#c0c0c0"/><rect x="3" y="7" width="2" height="1" fill="#000000"/><rect x="5" y="7" width="2" height="1" fill="#ffffff"/><rect x="7" y="7" width="2" height="1" fill="#000000"/><rect x="9" y="7" width="2" height="1" fill="#ffffff"/><rect x="11" y="7" width="2" height="1" fill="#000000"/><rect x="13" y="7" width="2" height="1" fill="#ffffff"/><rect x="15" y="7" width="2" height="1" fill="#000000"/><rect x="17" y="7" width="1" height="1" fill="#c0c0c0"/><rect x="18" y="7" width="1" height="1" fill="#808080"/><rect x="19" y="7" width="1" height="1" fill="#000000"/><rect x="0" y="8" width="1" height="1" fill="#ffffff"/><rect x="1" y="8" width="2" height="1" fill="#c0c0c0"/><rect x="3" y="8" width="2" height="1" fill="#ffffff"/><rect x="5" y="8" width="2" height="1" fill="#000000"/><rect x="7" y="8" width="2" height="1" fill="#ffffff"/><rect x="9" y="8" width="2" height="1" fill="#000000"/><rect x="11" y="8" width="2" height="1" fill="#ffffff"/><rect x="13" y="8" width="2" height="1" fill="#000000"/><rect x="15" y="8" width="2" height="1" fill="#ffffff"/><rect x="17" y="8" width="1" height="1" fill="#c0c0c0"/><rect x="18" y="8" width="1" height="1" fill="#808080"/><rect x="19" y="8" width="1" height="1" fill="#000000"/><rect x="0" y="9" width="1" height="1" fill="#ffffff"/><rect x="1" y="9" width="2" height="1" fill="#c0c0c0"/><rect x="3" y="9" width="2" height="1" fill="#ffffff"/><rect x="5" y="9" width="2" height="1" fill="#000000"/><rect x="7" y="9" width="2" height="1" fill="#ffffff"/><rect x="9" y="9" width="2" height="1" fill="#000000"/><rect x="11" y="9" width="2" height="1" fill="#ffffff"/><rect x="13" y="9" width="2" height="1" fill="#000000"/><rect x="15" y="9" width="2" height="1" fill="#ffffff"/><rect x="17" y="9" width="1" height="1" fill="#c0c0c0"/><rect x="18" y="9" width="1" height="1" fill="#808080"/><rect x="19" y="9" width="1" height="1" fill="#000000"/><rect x="0" y="10" width="1" height="1" fill="#ffffff"/><rect x="1" y="10" width="2" height="1" fill="#c0c0c0"/><rect x="3" y="10" width="2" height="1" fill="#000000"/><rect x="5" y="10" width="2" height="1" fill="#ffffff"/><rect x="7" y="10" width="2" height="1" fill="#000000"/><rect x="9" y="10" width="2" height="1" fill="#ffffff"/><rect x="11" y="10" width="2" height="1" fill="#000000"/><rect x="13" y="10" width="2" height="1" fill="#ffffff"/><rect x="15" y="10" width="2" height="1" fill="#000000"/><rect x="17" y="10" width="1" height="1" fill="#c0c0c0"/><rect x="18" y="10" width="1" height="1" fill="#808080"/><rect x="19" y="10" width="1" height="1" fill="#000000"/><rect x="0" y="11" width="1" height="1" fill="#ffffff"/><rect x="1" y="11" width="2" height="1" fill="#c0c0c0"/><rect x="3" y="11" width="2" height="1" fill="#000000"/><rect x="5" y="11" width="2" height="1" fill="#ffffff"/><rect x="7" y="11" width="2" height="1" fill="#000000"/><rect x="9" y="11" width="2" height="1" fill="#ffffff"/><rect x="11" y="11" width="2" height="1" fill="#000000"/><rect x="13" y="11" width="2" height="1" fill="#ffffff"/><rect x="15" y="11" width="2" height="1" fill="#000000"/><rect x="17" y="11" width="1" height="1" fill="#c0c0c0"/><rect x="18" y="11" width="1" height="1" fill="#808080"/><rect x="19" y="11" width="1" height="1" fill="#000000"/><rect x="0" y="12" width="1" height="1" fill="#ffffff"/><rect x="1" y="12" width="2" height="1" fill="#c0c0c0"/><rect x="3" y="12" width="2" height="1" fill="#ffffff"/><rect x="5" y="12" width="2" height="1" fill="#000000"/><rect x="7" y="12" width="2" height="1" fill="#ffffff"/><rect x="9" y="12" width="2" height="1" fill="#000000"/><rect x="11" y="12" width="2" height="1" fill="#ffffff"/><rect x="13" y="12" width="2" height="1" fill="#000000"/><rect x="15" y="12" width="2" height="1" fill="#ffffff"/><rect x="17" y="12" width="1" height="1" fill="#c0c0c0"/><rect x="18" y="12" width="1" height="1" fill="#808080"/><rect x="19" y="12" width="1" height="1" fill="#000000"/><rect x="0" y="13" width="1" height="1" fill="#ffffff"/><rect x="1" y="13" width="2" height="1" fill="#c0c0c0"/><rect x="3" y="13" width="2" height="1" fill="#ffffff"/><rect x="5" y="13" width="2" height="1" fill="#000000"/><rect x="7" y="13" width="2" height="1" fill="#ffffff"/><rect x="9" y="13" width="2" height="1" fill="#000000"/><rect x="11" y="13" width="2" height="1" fill="#ffffff"/><rect x="13" y="13" width="2" height="1" fill="#000000"/><rect x="15" y="13" width="2" height="1" fill="#ffffff"/><rect x="17" y="13" width="1" height="1" fill="#c0c0c0"/><rect x="18" y="13" width="1" height="1" fill="#808080"/><rect x="19" y="13" width="1" height="1" fill="#000000"/><rect x="0" y="14" width="1" height="1" fill="#ffffff"/><rect x="1" y="14" width="17" height="1" fill="#c0c0c0"/><rect x="18" y="14" width="1" height="1" fill="#808080"/><rect x="19" y="14" width="1" height="1" fill="#000000"/><rect x="0" y="15" width="1" height="1" fill="#ffffff"/><rect x="1" y="15" width="18" height="1" fill="#808080"/><rect x="19" y="15" width="1" height="1" fill="#000000"/><rect x="0" y="16" width="20" height="1" fill="#000000"/></svg>
<div style="left:151px;top:721px;width:20px;height:20px;background:#b4b4b4;"></div>
<svg style="position:absolute;left:151px;top:721px" width="20" height="20" shape-rendering="crispEdges"><rect x="0" y="3" width="19" height="1" fill="#ffffff"/><rect x="19" y="3" width="1" height="1" fill="#000000"/><rect x="0" y="4" width="1" height="1" fill="#ffffff"/><rect x="1" y="4" width="17" height="1" fill="#c0c0c0"/><rect x="18" y="4" width="1" height="1" fill="#808080"/><rect x="19" y="4" width="1" height="1" fill="#000000"/><rect x="0" y="5" width="1" height="1" fill="#ffffff"/><rect x="1" y="5" width="3" height="1" fill="#c0c0c0"/><rect x="4" y="5" width="4" height="1" fill="#000080"/><rect x="8" y="5" width="5" height="1" fill="#c0c0c0"/><rect x="13" y="5" width="2" height="1" fill="#000000"/><rect x="15" y="5" width="3" height="1" fill="#c0c0c0"/><rect x="18" y="5" width="1" height="1" fill="#808080"/><rect x="19" y="5" width="1" height="1" fill="#000000"/><rect x="0" y="6" width="1" height="1" fill="#ffffff"/><rect x="1" y="6" width="2" height="1" fill="#c0c0c0"/><rect x="3" y="6" width="1" height="1" fill="#000080"/><rect x="4" y="6" width="4" height="1" fill="#0000ff"/><rect x="8" y="6" width="1" height="1" fill="#000080"/><rect x="9" y="6" width="3" height="1" fill="#c0c0c0"/><rect x="12" y="6" width="1" height="1" fill="#000000"/><rect x="13" y="6" width="5" height="1" fill="#c0c0c0"/><rect x="18" y="6" width="1" height="1" fill="#808080"/><rect x="19" y="6" width="1" height="1" fill="#000000"/><rect x="0" y="7" width="1" height="1" fill="#ffffff"/><rect x="1" y="7" width="1" height="1" fill="#c0c0c0"/><rect x="2" y="7" width="1" height="1" fill="#000080"/><rect x="3" y="7" width="2" height="1" fill="#0000ff"/><rect x="5" y="7" width="2" height="1" fill="#00ffff"/><rect x="7" y="7" width="2" height="1" fill="#0000ff"/><rect x="9" y="7" width="1" height="1" fill="#000080"/><rect x="10" y="7" width="2" height="1" fill="#c0c0c0"/><rect x="12" y="7" width="1" height="1" fill="#000000"/><rect x="13" y="7" width="5" height="1" fill="#c0c0c0"/><rect x="18" y="7" width="1" height="1" fill="#808080"/><rect x="19" y="7" width="1" height="1" fill="#000000"/><rect x="0" y="8" width="1" height="1" fill="#ffffff"/><rect x="1" y="8" width="1" height="1" fill="#c0c0c0"/><rect x="2" y="8" width="1" height="1" fill="#000080"/><rect x="3" y="8" width="1" height="1" fill="#0000ff"/><rect x="4" y="8" width="4" height="1" fill="#00ffff"/><rect x="8" y="8" width="1" height="1" fill="#0000ff"/><rect x="9" y="8" width="1" height="1" fill="#000080"/><rect x="10" y="8" width="1" height="1" fill="#c0c0c0"/><rect x="11" y="8" width="1" height="1" fill="#000000"/><rect x="12" y="8" width="6" height="1" fill="#c0c0c0"/><rect x="18" y="8" width="1" height="1" fill="#808080"/><rect x="19" y="8" width="1" height="1" fill="#000000"/><rect x="0" y="9" width="1" height="1" fill="#ffffff"/><rect x="1" y="9" width="1" height="1" fill="#c0c0c0"/><rect x="2" y="9" width="1" height="1" fill="#000080"/><rect x="3" y="9" width="2" height="1" fill="#0000ff"/><rect x="5" y="9" width="2" height="1" fill="#00ffff"/><rect x="7" y="9" width="2" height="1" fill="#0000ff"/><rect x="9" y="9" width="1" height="1" fill="#000080"/><rect x="10" y="9" width="1" height="1" fill="#c0c0c0"/><rect x="11" y="9" width="1" height="1" fill="#000000"/><rect x="12" y="9" width="6" height="1" fill="#c0c0c0"/><rect x="18" y="9" width="1" height="1" fill="#808080"/><rect x="19" y="9" width="1" height="1" fill="#000000"/><rect x="0" y="10" width="1" height="1" fill="#ffffff"/><rect x="1" y="10" width="1" height="1" fill="#c0c0c0"/><rect x="2" y="10" width="1" height="1" fill="#000080"/><rect x="3" y="10" width="6" height="1" fill="#0000ff"/><rect x="9" y="10" width="1" height="1" fill="#000080"/><rect x="10" y="10" width="1" height="1" fill="#c0c0c0"/><rect x="11" y="10" width="1" height="1" fill="#000000"/><rect x="12" y="10" width="6" height="1" fill="#c0c0c0"/><rect x="18" y="10" width="1" height="1" fill="#808080"/><rect x="19" y="10" width="1" height="1" fill="#000000"/><rect x="0" y="11" width="1" height="1" fill="#ffffff"/><rect x="1" y="11" width="1" height="1" fill="#c0c0c0"/><rect x="2" y="11" width="1" height="1" fill="#000080"/><rect x="3" y="11" width="6" height="1" fill="#0000ff"/><rect x="9" y="11" width="1" height="1" fill="#000080"/><rect x="10" y="11" width="2" height="1" fill="#c0c0c0"/><rect x="12" y="11" width="1" height="1" fill="#000000"/><rect x="13" y="11" width="5" height="1" fill="#c0c0c0"/><rect x="18" y="11" width="1" height="1" fill="#808080"/><rect x="19" y="11" width="1" height="1" fill="#000000"/><rect x="0" y="12" width="1" height="1" fill="#ffffff"/><rect x="1" y="12" width="2" height="1" fill="#c0c0c0"/><rect x="3" y="12" width="1" height="1" fill="#000080"/><rect x="4" y="12" width="4" height="1" fill="#0000ff"/><rect x="8" y="12" width="1" height="1" fill="#000080"/><rect x="9" y="12" width="3" height="1" fill="#c0c0c0"/><rect x="12" y="12" width="1" height="1" fill="#000000"/><rect x="13" y="12" width="5" height="1" fill="#c0c0c0"/><rect x="18" y="12" width="1" height="1" fill="#808080"/><rect x="19" y="12" width="1" height="1" fill="#000000"/><rect x="0" y="13" width="1" height="1" fill="#ffffff"/><rect x="1" y="13" width="3" height="1" fill="#c0c0c0"/><rect x="4" y="13" width="4" height="1" fill="#000080"/><rect x="8" y="13" width="5" height="1" fill="#c0c0c0"/><rect x="13" y="13" width="2" height="1" fill="#000000"/><rect x="15" y="13" width="3" height="1" fill="#c0c0c0"/><rect x="18" y="13" width="1" height="1" fill="#808080"/><rect x="19" y="13" width="1" height="1" fill="#000000"/><rect x="0" y="14" width="1" height="1" fill="#ffffff"/><rect x="1" y="14" width="17" height="1" fill="#c0c0c0"/><rect x="18" y="14" width="1" height="1" fill="#808080"/><rect x="19" y="14" width="1" height="1" fill="#000000"/><rect x="0" y="15" width="1" height="1" fill="#ffffff"/><rect x="1" y="15" width="18" height="1" fill="#808080"/><rect x="19" y="15" width="1" height="1" fill="#000000"/><rect x="0" y="16" width="20" height="1" fill="#000000"/></svg>
<div style="left:178px;top:721px;width:20px;height:20px;background:#b4b4b4;"></div>
<svg style="position:absolute;left:178px;top:721px" width="20" height="20" shape-rendering="crispEdges"><rect x="0" y="3" width="19" height="1" fill="#ffffff"/><rect x="19" y="3" width="1" height="1" fill="#000000"/><rect x="0" y="4" width="1" height="1" fill="#ffffff"/><rect x="1" y="4" width="17" height="1" fill="#c0c0c0"/><rect x="18" y="4" width="1" height="1" fill="#808080"/><rect x="19" y="4" width="1" height="1" fill="#000000"/><rect x="0" y="5" width="1" height="1" fill="#ffffff"/><rect x="1" y="5" width="7" height="1" fill="#c0c0c0"/><rect x="8" y="5" width="4" height="1" fill="#000000"/><rect x="12" y="5" width="6" height="1" fill="#c0c0c0"/><rect x="18" y="5" width="1" height="1" fill="#808080"/><rect x="19" y="5" width="1" height="1" fill="#000000"/><rect x="0" y="6" width="1" height="1" fill="#ffffff"/><rect x="1" y="6" width="7" height="1" fill="#c0c0c0"/><rect x="8" y="6" width="1" height="1" fill="#000000"/><rect x="9" y="6" width="2" height="1" fill="#ffffff"/><rect x="11" y="6" width="1" height="1" fill="#000000"/><rect x="12" y="6" width="6" height="1" fill="#c0c0c0"/><rect x="18" y="6" width="1" height="1" fill="#808080"/><rect x="19" y="6" width="1" height="1" fill="#000000"/><rect x="0" y="7" width="1" height="1" fill="#ffffff"/><rect x="1" y="7" width="5" height="1" fill="#c0c0c0"/><rect x="6" y="7" width="3" height="1" fill="#000000"/><rect x="9" y="7" width="2" height="1" fill="#ffffff"/><rect x="11" y="7" width="3" height="1" fill="#000000"/><rect x="14" y="7" width="4" height="1" fill="#c0c0c0"/><rect x="18" y="7" width="1" height="1" fill="#808080"/><rect x="19" y="7" width="1" height="1" fill="#000000"/><rect x="0" y="8" width="1" height="1" fill="#ffffff"/><rect x="1" y="8" width="5" height="1" fill="#c0c0c0"/><rect x="6" y="8" width="1" height="1" fill="#000000"/><rect x="7" y="8" width="6" height="1" fill="#ffffff"/><rect x="13" y="8" width="1" height="1" fill="#000000"/><rect x="14" y="8" width="4" height="1" fill="#c0c0c0"/><rect x="18" y="8" width="1" height="1" fill="#808080"/><rect x="19" y="8" width="1" height="1" fill="#000000"/><rect x="0" y="9" width="1" height="1" fill="#ffffff"/><rect x="1" y="9" width="5" height="1" fill="#c0c0c0"/><rect x="6" y="9" width="1" height="1" fill="#000000"/><rect x="7" y="9" width="6" height="1" fill="#ffffff"/><rect x="13" y="9" width="1" height="1" fill="#000000"/><rect x="14" y="9" width="4" height="1" fill="#c0c0c0"/><rect x="18" y="9" width="1" height="1" fill="#808080"/><rect x="19" y="9" width="1" height="1" fill="#000000"/><rect x="0" y="10" width="1" height="1" fill="#ffffff"/><rect x="1" y="10" width="5" height="1" fill="#c0c0c0"/><rect x="6" y="10" width="3" height="1" fill="#000000"/><rect x="9" y="10" width="2" height="1" fill="#ffffff"/><rect x="11" y="10" width="3" height="1" fill="#000000"/><rect x="14" y="10" width="4" height="1" fill="#c0c0c0"/><rect x="18" y="10" width="1" height="1" fill="#808080"/><rect x="19" y="10" width="1" height="1" fill="#000000"/><rect x="0" y="11" width="1" height="1" fill="#ffffff"/><rect x="1" y="11" width="7" height="1" fill="#c0c0c0"/><rect x="8" y="11" width="1" height="1" fill="#000000"/><rect x="9" y="11" width="2" height="1" fill="#ffffff"/><rect x="11" y="11" width="1" height="1" fill="#000000"/><rect x="12" y="11" width="6" height="1" fill="#c0c0c0"/><rect x="18" y="11" width="1" height="1" fill="#808080"/><rect x="19" y="11" width="1" height="1" fill="#000000"/><rect x="0" y="12" width="1" height="1" fill="#ffffff"/><rect x="1" y="12" width="7" height="1" fill="#c0c0c0"/><rect x="8" y="12" width="1" height="1" fill="#000000"/><rect x="9" y="12" width="2" height="1" fill="#ffffff"/><rect x="11" y="12" width="1" height="1" fill="#000000"/><rect x="12" y="12" width="6" height="1" fill="#c0c0c0"/><rect x="18" y="12" width="1" height="1" fill="#808080"/><rect x="19" y="12" width="1" height="1" fill="#000000"/><rect x="0" y="13" width="1" height="1" fill="#ffffff"/><rect x="1" y="13" width="7" height="1" fill="#c0c0c0"/><rect x="8" y="13" width="4" height="1" fill="#000000"/><rect x="12" y="13" width="6" height="1" fill="#c0c0c0"/><rect x="18" y="13" width="1" height="1" fill="#808080"/><rect x="19" y="13" width="1" height="1" fill="#000000"/><rect x="0" y="14" width="1" height="1" fill="#ffffff"/><rect x="1" y="14" width="17" height="1" fill="#c0c0c0"/><rect x="18" y="14" width="1" height="1" fill="#808080"/><rect x="19" y="14" width="1" height="1" fill="#000000"/><rect x="0" y="15" width="1" height="1" fill="#ffffff"/><rect x="1" y="15" width="18" height="1" fill="#808080"/><rect x="19" y="15" width="1" height="1" fill="#000000"/><rect x="0" y="16" width="20" height="1" fill="#000000"/></svg>
<div style="left:205px;top:721px;width:20px;height:20px;background:#b4b4b4;"></div>
<svg style="position:absolute;left:205px;top:721px" width="20" height="20" shape-rendering="crispEdges"><rect x="0" y="3" width="19" height="1" fill="#ffffff"/><rect x="19" y="3" width="1" height="1" fill="#000000"/><rect x="0" y="4" width="1" height="1" fill="#ffffff"/><rect x="1" y="4" width="17" height="1" fill="#c0c0c0"/><rect x="18" y="4" width="1" height="1" fill="#808080"/><rect x="19" y="4" width="1" height="1" fill="#000000"/><rect x="0" y="5" width="1" height="1" fill="#ffffff"/><rect x="1" y="5" width="17" height="1" fill="#c0c0c0"/><rect x="18" y="5" width="1" height="1" fill="#808080"/><rect x="19" y="5" width="1" height="1" fill="#000000"/><rect x="0" y="6" width="1" height="1" fill="#ffffff"/><rect x="1" y="6" width="17" height="1" fill="#c0c0c0"/><rect x="18" y="6" width="1" height="1" fill="#808080"/><rect x="19" y="6" width="1" height="1" fill="#000000"/><rect x="0" y="7" width="1" height="1" fill="#ffffff"/><rect x="1" y="7" width="12" height="1" fill="#c0c0c0"/><rect x="13" y="7" width="2" height="1" fill="#000000"/><rect x="15" y="7" width="3" height="1" fill="#c0c0c0"/><rect x="18" y="7" width="1" height="1" fill="#808080"/><rect x="19" y="7" width="1" height="1" fill="#000000"/><rect x="0" y="8" width="1" height="1" fill="#ffffff"/><rect x="1" y="8" width="4" height="1" fill="#c0c0c0"/><rect x="5" y="8" width="2" height="1" fill="#000000"/><rect x="7" y="8" width="5" height="1" fill="#c0c0c0"/><rect x="12" y="8" width="3" height="1" fill="#000000"/><rect x="15" y="8" width="3" height="1" fill="#c0c0c0"/><rect x="18" y="8" width="1" height="1" fill="#808080"/><rect x="19" y="8" width="1" height="1" fill="#000000"/><rect x="0" y="9" width="1" height="1" fill="#ffffff"/><rect x="1" y="9" width="5" height="1" fill="#c0c0c0"/><rect x="6" y="9" width="2" height="1" fill="#000000"/><rect x="8" y="9" width="3" height="1" fill="#c0c0c0"/><rect x="11" y="9" width="3" height="1" fill="#000000"/><rect x="14" y="9" width="4" height="1" fill="#c0c0c0"/><rect x="18" y="9" width="1" height="1" fill="#808080"/><rect x="19" y="9" width="1" height="1" fill="#000000"/><rect x="0" y="10" width="1" height="1" fill="#ffffff"/><rect x="1" y="10" width="6" height="1" fill="#c0c0c0"/><rect x="7" y="10" width="2" height="1" fill="#000000"/><rect x="9" y="10" width="1" height="1" fill="#c0c0c0"/><rect x="10" y="10" width="3" height="1" fill="#000000"/><rect x="13" y="10" width="5" height="1" fill="#c0c0c0"/><rect x="18" y="10" width="1" height="1" fill="#808080"/><rect x="19" y="10" width="1" height="1" fill="#000000"/><rect x="0" y="11" width="1" height="1" fill="#ffffff"/><rect x="1" y="11" width="6" height="1" fill="#c0c0c0"/><rect x="7" y="11" width="5" height="1" fill="#000000"/><rect x="12" y="11" width="6" height="1" fill="#c0c0c0"/><rect x="18" y="11" width="1" height="1" fill="#808080"/><rect x="19" y="11" width="1" height="1" fill="#000000"/><rect x="0" y="12" width="1" height="1" fill="#ffffff"/><rect x="1" y="12" width="7" height="1" fill="#c0c0c0"/><rect x="8" y="12" width="3" height="1" fill="#000000"/><rect x="11" y="12" width="7" height="1" fill="#c0c0c0"/><rect x="18" y="12" width="1" height="1" fill="#808080"/><rect x="19" y="12" width="1" height="1" fill="#000000"/><rect x="0" y="13" width="1" height="1" fill="#ffffff"/><rect x="1" y="13" width="8" height="1" fill="#c0c0c0"/><rect x="9" y="13" width="1" height="1" fill="#000000"/><rect x="10" y="13" width="8" height="1" fill="#c0c0c0"/><rect x="18" y="13" width="1" height="1" fill="#808080"/><rect x="19" y="13" width="1" height="1" fill="#000000"/><rect x="0" y="14" width="1" height="1" fill="#ffffff"/><rect x="1" y="14" width="17" height="1" fill="#c0c0c0"/><rect x="18" y="14" width="1" height="1" fill="#808080"/><rect x="19" y="14" width="1" height="1" fill="#000000"/><rect x="0" y="15" width="1" height="1" fill="#ffffff"/><rect x="1" y="15" width="18" height="1" fill="#808080"/><rect x="19" y="15" width="1" height="1" fill="#000000"/><rect x="0" y="16" width="20" height="1" fill="#000000"/></svg>
<div style="left:232px;top:721px;width:20px;height:20px;background:#b4b4b4;"></div>
<svg style="position:absolute;left:232px;top:721px" width="20" height="20" shape-rendering="crispEdges"><rect x="0" y="3" width="19" height="1" fill="#808080"/><rect x="19" y="3" width="1" height="1" fill="#ffffff"/><rect x="0" y="4" width="1" height="1" fill="#808080"/><rect x="1" y="4" width="3" height="1" fill="#ff0000"/><rect x="4" y="4" width="3" height="1" fill="#ffff00"/><rect x="7" y="4" width="3" height="1" fill="#00ff00"/><rect x="10" y="4" width="3" height="1" fill="#00ffff"/><rect x="13" y="4" width="3" height="1" fill="#0000ff"/><rect x="16" y="4" width="3" height="1" fill="#ff00ff"/><rect x="19" y="4" width="1" height="1" fill="#ffffff"/><rect x="0" y="5" width="1" height="1" fill="#808080"/><rect x="1" y="5" width="3" height="1" fill="#ff0000"/><rect x="4" y="5" width="3" height="1" fill="#ffff00"/><rect x="7" y="5" width="3" height="1" fill="#00ff00"/><rect x="10" y="5" width="3" height="1" fill="#00ffff"/><rect x="13" y="5" width="3" height="1" fill="#0000ff"/><rect x="16" y="5" width="3" height="1" fill="#ff00ff"/><rect x="19" y="5" width="1" height="1" fill="#ffffff"/><rect x="0" y="6" width="1" height="1" fill="#808080"/><rect x="1" y="6" width="3" height="1" fill="#ff0000"/><rect x="4" y="6" width="3" height="1" fill="#ffff00"/><rect x="7" y="6" width="3" height="1" fill="#00ff00"/><rect x="10" y="6" width="3" height="1" fill="#00ffff"/><rect x="13" y="6" width="3" height="1" fill="#0000ff"/><rect x="16" y="6" width="3" height="1" fill="#ff00ff"/><rect x="19" y="6" width="1" height="1" fill="#ffffff"/><rect x="0" y="7" width="1" height="1" fill="#808080"/><rect x="1" y="7" width="3" height="1" fill="#ff0000"/><rect x="4" y="7" width="3" height="1" fill="#ffff00"/><rect x="7" y="7" width="3" height="1" fill="#00ff00"/><rect x="10" y="7" width="3" height="1" fill="#00ffff"/><rect x="13" y="7" width="3" height="1" fill="#0000ff"/><rect x="16" y="7" width="3" height="1" fill="#ff00ff"/><rect x="19" y="7" width="1" height="1" fill="#ffffff"/><rect x="0" y="8" width="1" height="1" fill="#808080"/><rect x="1" y="8" width="1" height="1" fill="#800000"/><rect x="2" y="8" width="1" height="1" fill="#ff0000"/><rect x="3" y="8" width="1" height="1" fill="#800000"/><rect x="4" y="8" width="1" height="1" fill="#808000"/><rect x="5" y="8" width="1" height="1" fill="#ffff00"/><rect x="6" y="8" width="1" height="1" fill="#808000"/><rect x="7" y="8" width="1" height="1" fill="#008000"/><rect x="8" y="8" width="1" height="1" fill="#00ff00"/><rect x="9" y="8" width="1" height="1" fill="#008000"/><rect x="10" y="8" width="1" height="1" fill="#008080"/><rect x="11" y="8" width="1" height="1" fill="#00ffff"/><rect x="12" y="8" width="1" height="1" fill="#008080"/><rect x="13" y="8" width="1" height="1" fill="#000080"/><rect x="14" y="8" width="1" height="1" fill="#0000ff"/><rect x="15" y="8" width="1" height="1" fill="#000080"/><rect x="16" y="8" width="1" height="1" fill="#800080"/><rect x="17" y="8" width="1" height="1" fill="#ff00ff"/><rect x="18" y="8" width="1" height="1" fill="#800080"/><rect x="19" y="8" width="1" height="1" fill="#ffffff"/><rect x="0" y="9" width="1" height="1" fill="#808080"/><rect x="1" y="9" width="3" height="1" fill="#800000"/><rect x="4" y="9" width="3" height="1" fill="#808000"/><rect x="7" y="9" width="3" height="1" fill="#008000"/><rect x="10" y="9" width="3" height="1" fill="#008080"/><rect x="13" y="9" width="3" height="1" fill="#000080"/><rect x="16" y="9" width="3" height="1" fill="#800080"/><rect x="19" y="9" width="1" height="1" fill="#ffffff"/><rect x="0" y="10" width="1" height="1" fill="#808080"/><rect x="1" y="10" width="3" height="1" fill="#800000"/><rect x="4" y="10" width="3" height="1" fill="#808000"/><rect x="7" y="10" width="3" height="1" fill="#008000"/><rect x="10" y="10" width="3" height="1" fill="#008080"/><rect x="13" y="10" width="3" height="1" fill="#000080"/><rect x="16" y="10" width="3" height="1" fill="#800080"/><rect x="19" y="10" width="1" height="1" fill="#ffffff"/><rect x="0" y="11" width="1" height="1" fill="#808080"/><rect x="1" y="11" width="3" height="1" fill="#800000"/><rect x="4" y="11" width="3" height="1" fill="#808000"/><rect x="7" y="11" width="3" height="1" fill="#008000"/><rect x="10" y="11" width="3" height="1" fill="#008080"/><rect x="13" y="11" width="3" height="1" fill="#000080"/><rect x="16" y="11" width="3" height="1" fill="#800080"/><rect x="19" y="11" width="1" height="1" fill="#ffffff"/><rect x="0" y="12" width="1" height="1" fill="#808080"/><rect x="1" y="12" width="18" height="1" fill="#000000"/><rect x="19" y="12" width="1" height="1" fill="#ffffff"/><rect x="0" y="13" width="1" height="1" fill="#808080"/><rect x="1" y="13" width="18" height="1" fill="#000000"/><rect x="19" y="13" width="1" height="1" fill="#ffffff"/><rect x="0" y="14" width="20" height="1" fill="#ffffff"/></svg>
<div style="left:259px;top:721px;width:20px;height:20px;background:#b4b4b4;"></div>
<svg style="position:absolute;left:259px;top:721px" width="20" height="20" shape-rendering="crispEdges"><rect x="2" y="3" width="15" height="1" fill="#000000"/><rect x="2" y="4" width="1" height="1" fill="#000000"/><rect x="3" y="4" width="13" height="1" fill="#d6d6d6"/><rect x="16" y="4" width="1" height="1" fill="#000000"/><rect x="2" y="5" width="1" height="1" fill="#000000"/><rect x="3" y="5" width="13" height="1" fill="#d6d6d6"/><rect x="16" y="5" width="1" height="1" fill="#000000"/><rect x="2" y="6" width="1" height="1" fill="#000000"/><rect x="3" y="6" width="13" height="1" fill="#d6d6d6"/><rect x="16" y="6" width="1" height="1" fill="#000000"/><rect x="2" y="7" width="15" height="1" fill="#000000"/><rect x="2" y="8" width="1" height="1" fill="#000000"/><rect x="3" y="8" width="7" height="1" fill="#d6d6d6"/><rect x="10" y="8" width="1" height="1" fill="#000000"/><rect x="11" y="8" width="5" height="1" fill="#d6d6d6"/><rect x="16" y="8" width="1" height="1" fill="#000000"/><rect x="2" y="9" width="1" height="1" fill="#000000"/><rect x="3" y="9" width="7" height="1" fill="#d6d6d6"/><rect x="10" y="9" width="1" height="1" fill="#000000"/><rect x="11" y="9" width="2" height="1" fill="#d6d6d6"/><rect x="13" y="9" width="1" height="1" fill="#000000"/><rect x="14" y="9" width="2" height="1" fill="#d6d6d6"/><rect x="16" y="9" width="1" height="1" fill="#000000"/><rect x="2" y="10" width="1" height="1" fill="#000000"/><rect x="3" y="10" width="1" height="1" fill="#d6d6d6"/><rect x="4" y="10" width="3" height="1" fill="#000000"/><rect x="7" y="10" width="3" height="1" fill="#d6d6d6"/><rect x="10" y="10" width="1" height="1" fill="#000000"/><rect x="11" y="10" width="1" height="1" fill="#d6d6d6"/><rect x="12" y="10" width="3" height="1" fill="#000000"/><rect x="15" y="10" width="1" height="1" fill="#d6d6d6"/><rect x="16" y="10" width="1" height="1" fill="#000000"/><rect x="2" y="11" width="1" height="1" fill="#000000"/><rect x="3" y="11" width="7" height="1" fill="#d6d6d6"/><rect x="10" y="11" width="1" height="1" fill="#000000"/><rect x="11" y="11" width="5" height="1" fill="#d6d6d6"/><rect x="16" y="11" width="1" height="1" fill="#000000"/><rect x="2" y="12" width="1" height="1" fill="#000000"/><rect x="3" y="12" width="1" height="1" fill="#d6d6d6"/><rect x="4" y="12" width="5" height="1" fill="#000000"/><rect x="9" y="12" width="1" height="1" fill="#d6d6d6"/><rect x="10" y="12" width="7" height="1" fill="#000000"/><rect x="2" y="13" width="1" height="1" fill="#000000"/><rect x="3" y="13" width="7" height="1" fill="#d6d6d6"/><rect x="10" y="13" width="1" height="1" fill="#000000"/><rect x="11" y="13" width="5" height="1" fill="#d6d6d6"/><rect x="16" y="13" width="1" height="1" fill="#000000"/><rect x="2" y="14" width="1" height="1" fill="#000000"/><rect x="3" y="14" width="1" height="1" fill="#d6d6d6"/><rect x="4" y="14" width="4" height="1" fill="#000000"/><rect x="8" y="14" width="2" height="1" fill="#d6d6d6"/><rect x="10" y="14" width="1" height="1" fill="#000000"/><rect x="11" y="14" width="1" height="1" fill="#d6d6d6"/><rect x="12" y="14" width="3" height="1" fill="#000000"/><rect x="15" y="14" width="1" height="1" fill="#d6d6d6"/><rect x="16" y="14" width="1" height="1" fill="#000000"/><rect x="2" y="15" width="1" height="1" fill="#000000"/><rect x="3" y="15" width="7" height="1" fill="#d6d6d6"/><rect x="10" y="15" width="1" height="1" fill="#000000"/><rect x="11" y="15" width="2" height="1" fill="#d6d6d6"/><rect x="13" y="15" width="1" height="1" fill="#000000"/><rect x="14" y="15" width="2" height="1" fill="#d6d6d6"/><rect x="16" y="15" width="1" height="1" fill="#000000"/><rect x="2" y="16" width="1" height="1" fill="#000000"/><rect x="3" y="16" width="7" height="1" fill="#d6d6d6"/><rect x="10" y="16" width="1" height="1" fill="#000000"/><rect x="11" y="16" width="5" height="1" fill="#d6d6d6"/><rect x="16" y="16" width="1" height="1" fill="#000000"/><rect x="2" y="17" width="15" height="1" fill="#000000"/></svg>
<div style="left:286px;top:721px;width:20px;height:20px;background:#b4b4b4;"></div>
<svg style="position:absolute;left:286px;top:721px" width="20" height="20" shape-rendering="crispEdges"><rect x="2" y="3" width="16" height="1" fill="#000000"/><rect x="2" y="4" width="1" height="1" fill="#000000"/><rect x="3" y="4" width="8" height="1" fill="#ffffff"/><rect x="11" y="4" width="2" height="1" fill="#000000"/><rect x="13" y="4" width="3" height="1" fill="#ffffff"/><rect x="16" y="4" width="2" height="1" fill="#000000"/><rect x="2" y="5" width="1" height="1" fill="#000000"/><rect x="3" y="5" width="8" height="1" fill="#ffffff"/><rect x="11" y="5" width="3" height="1" fill="#000000"/><rect x="14" y="5" width="1" height="1" fill="#ffffff"/><rect x="15" y="5" width="3" height="1" fill="#000000"/><rect x="2" y="6" width="16" height="1" fill="#000000"/><rect x="3" y="7" width="1" height="1" fill="#000000"/><rect x="4" y="7" width="7" height="1" fill="#d6d6d6"/><rect x="11" y="7" width="1" height="1" fill="#000000"/><rect x="12" y="7" width="5" height="1" fill="#d6d6d6"/><rect x="17" y="7" width="1" height="1" fill="#000000"/><rect x="3" y="8" width="1" height="1" fill="#000000"/><rect x="4" y="8" width="7" height="1" fill="#d6d6d6"/><rect x="11" y="8" width="1" height="1" fill="#000000"/><rect x="12" y="8" width="2" height="1" fill="#d6d6d6"/><rect x="14" y="8" width="1" height="1" fill="#000000"/><rect x="15" y="8" width="2" height="1" fill="#d6d6d6"/><rect x="17" y="8" width="1" height="1" fill="#000000"/><rect x="3" y="9" width="1" height="1" fill="#000000"/><rect x="4" y="9" width="1" height="1" fill="#d6d6d6"/><rect x="5" y="9" width="3" height="1" fill="#000000"/><rect x="8" y="9" width="3" height="1" fill="#d6d6d6"/><rect x="11" y="9" width="1" height="1" fill="#000000"/><rect x="12" y="9" width="1" height="1" fill="#d6d6d6"/><rect x="13" y="9" width="3" height="1" fill="#000000"/><rect x="16" y="9" width="1" height="1" fill="#d6d6d6"/><rect x="17" y="9" width="1" height="1" fill="#000000"/><rect x="3" y="10" width="1" height="1" fill="#000000"/><rect x="4" y="10" width="7" height="1" fill="#d6d6d6"/><rect x="11" y="10" width="1" height="1" fill="#000000"/><rect x="12" y="10" width="5" height="1" fill="#d6d6d6"/><rect x="17" y="10" width="1" height="1" fill="#000000"/><rect x="3" y="11" width="1" height="1" fill="#000000"/><rect x="4" y="11" width="1" height="1" fill="#d6d6d6"/><rect x="5" y="11" width="5" height="1" fill="#000000"/><rect x="10" y="11" width="1" height="1" fill="#d6d6d6"/><rect x="11" y="11" width="7" height="1" fill="#000000"/><rect x="3" y="12" width="1" height="1" fill="#000000"/><rect x="4" y="12" width="7" height="1" fill="#d6d6d6"/><rect x="11" y="12" width="1" height="1" fill="#000000"/><rect x="12" y="12" width="5" height="1" fill="#d6d6d6"/><rect x="17" y="12" width="1" height="1" fill="#000000"/><rect x="3" y="13" width="1" height="1" fill="#000000"/><rect x="4" y="13" width="1" height="1" fill="#d6d6d6"/><rect x="5" y="13" width="4" height="1" fill="#000000"/><rect x="9" y="13" width="2" height="1" fill="#d6d6d6"/><rect x="11" y="13" width="1" height="1" fill="#000000"/><rect x="12" y="13" width="1" height="1" fill="#d6d6d6"/><rect x="13" y="13" width="3" height="1" fill="#000000"/><rect x="16" y="13" width="1" height="1" fill="#d6d6d6"/><rect x="17" y="13" width="1" height="1" fill="#000000"/><rect x="3" y="14" width="1" height="1" fill="#000000"/><rect x="4" y="14" width="7" height="1" fill="#d6d6d6"/><rect x="11" y="14" width="1" height="1" fill="#000000"/><rect x="12" y="14" width="2" height="1" fill="#d6d6d6"/><rect x="14" y="14" width="1" height="1" fill="#000000"/><rect x="15" y="14" width="2" height="1" fill="#d6d6d6"/><rect x="17" y="14" width="1" height="1" fill="#000000"/><rect x="3" y="15" width="1" height="1" fill="#000000"/><rect x="4" y="15" width="7" height="1" fill="#d6d6d6"/><rect x="11" y="15" width="1" height="1" fill="#000000"/><rect x="12" y="15" width="5" height="1" fill="#d6d6d6"/><rect x="17" y="15" width="1" height="1" fill="#000000"/><rect x="3" y="16" width="15" height="1" fill="#000000"/></svg>
<div style="left:313px;top:721px;width:20px;height:20px;background:#b4b4b4;"></div>
<svg style="position:absolute;left:313px;top:721px" width="20" height="20" shape-rendering="crispEdges"><rect x="3" y="5" width="15" height="1" fill="#000000"/><rect x="3" y="6" width="1" height="1" fill="#000000"/><rect x="4" y="6" width="7" height="1" fill="#d6d6d6"/><rect x="11" y="6" width="1" height="1" fill="#000000"/><rect x="12" y="6" width="5" height="1" fill="#d6d6d6"/><rect x="17" y="6" width="1" height="1" fill="#000000"/><rect x="3" y="7" width="1" height="1" fill="#000000"/><rect x="4" y="7" width="7" height="1" fill="#d6d6d6"/><rect x="11" y="7" width="1" height="1" fill="#000000"/><rect x="12" y="7" width="2" height="1" fill="#d6d6d6"/><rect x="14" y="7" width="1" height="1" fill="#000000"/><rect x="15" y="7" width="2" height="1" fill="#d6d6d6"/><rect x="17" y="7" width="1" height="1" fill="#000000"/><rect x="3" y="8" width="1" height="1" fill="#000000"/><rect x="4" y="8" width="1" height="1" fill="#d6d6d6"/><rect x="5" y="8" width="3" height="1" fill="#000000"/><rect x="8" y="8" width="3" height="1" fill="#d6d6d6"/><rect x="11" y="8" width="1" height="1" fill="#000000"/><rect x="12" y="8" width="1" height="1" fill="#d6d6d6"/><rect x="13" y="8" width="3" height="1" fill="#000000"/><rect x="16" y="8" width="1" height="1" fill="#d6d6d6"/><rect x="17" y="8" width="1" height="1" fill="#000000"/><rect x="3" y="9" width="1" height="1" fill="#000000"/><rect x="4" y="9" width="7" height="1" fill="#d6d6d6"/><rect x="11" y="9" width="1" height="1" fill="#000000"/><rect x="12" y="9" width="5" height="1" fill="#d6d6d6"/><rect x="17" y="9" width="1" height="1" fill="#000000"/><rect x="3" y="10" width="1" height="1" fill="#000000"/><rect x="4" y="10" width="1" height="1" fill="#d6d6d6"/><rect x="5" y="10" width="5" height="1" fill="#000000"/><rect x="10" y="10" width="1" height="1" fill="#d6d6d6"/><rect x="11" y="10" width="7" height="1" fill="#000000"/><rect x="3" y="11" width="1" height="1" fill="#000000"/><rect x="4" y="11" width="7" height="1" fill="#d6d6d6"/><rect x="11" y="11" width="1" height="1" fill="#000000"/><rect x="12" y="11" width="5" height="1" fill="#d6d6d6"/><rect x="17" y="11" width="1" height="1" fill="#000000"/><rect x="3" y="12" width="1" height="1" fill="#000000"/><rect x="4" y="12" width="1" height="1" fill="#d6d6d6"/><rect x="5" y="12" width="4" height="1" fill="#000000"/><rect x="9" y="12" width="2" height="1" fill="#d6d6d6"/><rect x="11" y="12" width="1" height="1" fill="#000000"/><rect x="12" y="12" width="1" height="1" fill="#d6d6d6"/><rect x="13" y="12" width="3" height="1" fill="#000000"/><rect x="16" y="12" width="1" height="1" fill="#d6d6d6"/><rect x="17" y="12" width="1" height="1" fill="#000000"/><rect x="3" y="13" width="1" height="1" fill="#000000"/><rect x="4" y="13" width="7" height="1" fill="#d6d6d6"/><rect x="11" y="13" width="1" height="1" fill="#000000"/><rect x="12" y="13" width="2" height="1" fill="#d6d6d6"/><rect x="14" y="13" width="1" height="1" fill="#000000"/><rect x="15" y="13" width="2" height="1" fill="#d6d6d6"/><rect x="17" y="13" width="1" height="1" fill="#000000"/><rect x="3" y="14" width="1" height="1" fill="#000000"/><rect x="4" y="14" width="7" height="1" fill="#d6d6d6"/><rect x="11" y="14" width="1" height="1" fill="#000000"/><rect x="12" y="14" width="5" height="1" fill="#d6d6d6"/><rect x="17" y="14" width="1" height="1" fill="#000000"/><rect x="3" y="15" width="15" height="1" fill="#000000"/></svg>
<div style="left:340px;top:721px;width:20px;height:20px;background:#b4b4b4;"></div>
<svg style="position:absolute;left:340px;top:721px" width="20" height="20" shape-rendering="crispEdges"><rect x="18" y="4" width="1" height="1" fill="#808080"/><rect x="1" y="5" width="17" height="1" fill="#000000"/><rect x="18" y="5" width="1" height="1" fill="#e0e0e0"/><rect x="1" y="6" width="1" height="1" fill="#000000"/><rect x="2" y="6" width="16" height="1" fill="#ffffff"/><rect x="18" y="6" width="1" height="1" fill="#e0e0e0"/><rect x="1" y="7" width="1" height="1" fill="#000000"/><rect x="2" y="7" width="6" height="1" fill="#ffffff"/><rect x="8" y="7" width="1" height="1" fill="#000000"/><rect x="9" y="7" width="9" height="1" fill="#ffffff"/><rect x="18" y="7" width="1" height="1" fill="#e0e0e0"/><rect x="1" y="8" width="1" height="1" fill="#000000"/><rect x="2" y="8" width="2" height="1" fill="#ffffff"/><rect x="4" y="8" width="3" height="1" fill="#000000"/><rect x="7" y="8" width="1" height="1" fill="#ffffff"/><rect x="8" y="8" width="1" height="1" fill="#000000"/><rect x="9" y="8" width="9" height="1" fill="#ffffff"/><rect x="18" y="8" width="1" height="1" fill="#e0e0e0"/><rect x="1" y="9" width="1" height="1" fill="#000000"/><rect x="2" y="9" width="4" height="1" fill="#ffffff"/><rect x="6" y="9" width="1" height="1" fill="#000000"/><rect x="7" y="9" width="1" height="1" fill="#ffffff"/><rect x="8" y="9" width="3" height="1" fill="#000000"/><rect x="11" y="9" width="3" height="1" fill="#ffffff"/><rect x="14" y="9" width="3" height="1" fill="#000000"/><rect x="17" y="9" width="1" height="1" fill="#ffffff"/><rect x="18" y="9" width="1" height="1" fill="#e0e0e0"/><rect x="1" y="10" width="1" height="1" fill="#000000"/><rect x="2" y="10" width="2" height="1" fill="#ffffff"/><rect x="4" y="10" width="3" height="1" fill="#000000"/><rect x="7" y="10" width="1" height="1" fill="#ffffff"/><rect x="8" y="10" width="1" height="1" fill="#000000"/><rect x="9" y="10" width="2" height="1" fill="#ffffff"/><rect x="11" y="10" width="1" height="1" fill="#000000"/><rect x="12" y="10" width="1" height="1" fill="#ffffff"/><rect x="13" y="10" width="1" height="1" fill="#000000"/><rect x="14" y="10" width="4" height="1" fill="#ffffff"/><rect x="18" y="10" width="1" height="1" fill="#e0e0e0"/><rect x="1" y="11" width="1" height="1" fill="#000000"/><rect x="2" y="11" width="1" height="1" fill="#ffffff"/><rect x="3" y="11" width="1" height="1" fill="#000000"/><rect x="4" y="11" width="2" height="1" fill="#ffffff"/><rect x="6" y="11" width="1" height="1" fill="#000000"/><rect x="7" y="11" width="1" height="1" fill="#ffffff"/><rect x="8" y="11" width="1" height="1" fill="#000000"/><rect x="9" y="11" width="2" height="1" fill="#ffffff"/><rect x="11" y="11" width="1" height="1" fill="#000000"/><rect x="12" y="11" width="1" height="1" fill="#ffffff"/><rect x="13" y="11" width="1" height="1" fill="#000000"/><rect x="14" y="11" width="4" height="1" fill="#ffffff"/><rect x="18" y="11" width="1" height="1" fill="#e0e0e0"/><rect x="1" y="12" width="1" height="1" fill="#000000"/><rect x="2" y="12" width="2" height="1" fill="#ffffff"/><rect x="4" y="12" width="3" height="1" fill="#000000"/><rect x="7" y="12" width="1" height="1" fill="#ffffff"/><rect x="8" y="12" width="3" height="1" fill="#000000"/><rect x="11" y="12" width="3" height="1" fill="#ffffff"/><rect x="14" y="12" width="3" height="1" fill="#000000"/><rect x="17" y="12" width="1" height="1" fill="#ffffff"/><rect x="18" y="12" width="1" height="1" fill="#e0e0e0"/><rect x="1" y="13" width="1" height="1" fill="#000000"/><rect x="2" y="13" width="16" height="1" fill="#ffffff"/><rect x="18" y="13" width="1" height="1" fill="#e0e0e0"/><rect x="1" y="14" width="1" height="1" fill="#000000"/><rect x="2" y="14" width="16" height="1" fill="#d6d6d6"/><rect x="18" y="14" width="1" height="1" fill="#ffffff"/><rect x="1" y="15" width="18" height="1" fill="#ffffff"/></svg>
<div style="left:367px;top:721px;width:20px;height:20px;background:#b4b4b4;"></div>
<svg style="position:absolute;left:367px;top:721px" width="20" height="20" shape-rendering="crispEdges"><rect x="6" y="5" width="2" height="1" fill="#000000"/><rect x="6" y="6" width="2" height="1" fill="#000000"/><rect x="1" y="7" width="4" height="1" fill="#000000"/><rect x="6" y="7" width="5" height="1" fill="#000000"/><rect x="14" y="7" width="4" height="1" fill="#000000"/><rect x="4" y="8" width="4" height="1" fill="#000000"/><rect x="10" y="8" width="2" height="1" fill="#000000"/><rect x="13" y="8" width="2" height="1" fill="#000000"/><rect x="17" y="8" width="2" height="1" fill="#000000"/><rect x="1" y="9" width="7" height="1" fill="#000000"/><rect x="10" y="9" width="2" height="1" fill="#000000"/><rect x="13" y="9" width="2" height="1" fill="#000000"/><rect x="0" y="10" width="2" height="1" fill="#000000"/><rect x="4" y="10" width="4" height="1" fill="#000000"/><rect x="10" y="10" width="2" height="1" fill="#000000"/><rect x="13" y="10" width="2" height="1" fill="#000000"/><rect x="0" y="11" width="2" height="1" fill="#000000"/><rect x="4" y="11" width="4" height="1" fill="#000000"/><rect x="10" y="11" width="2" height="1" fill="#000000"/><rect x="13" y="11" width="2" height="1" fill="#000000"/><rect x="17" y="11" width="2" height="1" fill="#000000"/><rect x="1" y="12" width="10" height="1" fill="#000000"/><rect x="14" y="12" width="4" height="1" fill="#000000"/></svg>
<div style="left:394px;top:721px;width:20px;height:20px;background:#b4b4b4;"></div>
<svg style="position:absolute;left:394px;top:721px" width="20" height="20" shape-rendering="crispEdges"><rect x="10" y="0" width="1" height="1" fill="#000000"/><rect x="10" y="1" width="1" height="1" fill="#000000"/><rect x="0" y="2" width="4" height="1" fill="#808080"/><rect x="5" y="2" width="3" height="1" fill="#000000"/><rect x="10" y="2" width="1" height="1" fill="#000000"/><rect x="15" y="2" width="4" height="1" fill="#808080"/><rect x="19" y="2" width="1" height="1" fill="#ffffff"/><rect x="0" y="3" width="1" height="1" fill="#808080"/><rect x="1" y="3" width="3" height="1" fill="#ffffff"/><rect x="8" y="3" width="1" height="1" fill="#000000"/><rect x="10" y="3" width="3" height="1" fill="#000000"/><rect x="16" y="3" width="2" height="1" fill="#ffffff"/><rect x="18" y="3" width="1" height="1" fill="#808080"/><rect x="19" y="3" width="1" height="1" fill="#ffffff"/><rect x="0" y="4" width="1" height="1" fill="#808080"/><rect x="1" y="4" width="1" height="1" fill="#ffffff"/><rect x="5" y="4" width="4" height="1" fill="#000000"/><rect x="10" y="4" width="1" height="1" fill="#000000"/><rect x="13" y="4" width="1" height="1" fill="#000000"/><rect x="18" y="4" width="1" height="1" fill="#808080"/><rect x="19" y="4" width="1" height="1" fill="#ffffff"/><rect x="0" y="5" width="1" height="1" fill="#808080"/><rect x="1" y="5" width="1" height="1" fill="#ffffff"/><rect x="4" y="5" width="1" height="1" fill="#000000"/><rect x="8" y="5" width="1" height="1" fill="#000000"/><rect x="10" y="5" width="1" height="1" fill="#000000"/><rect x="13" y="5" width="1" height="1" fill="#000000"/><rect x="18" y="5" width="1" height="1" fill="#808080"/><rect x="19" y="5" width="1" height="1" fill="#ffffff"/><rect x="0" y="6" width="1" height="1" fill="#808080"/><rect x="1" y="6" width="1" height="1" fill="#ffffff"/><rect x="5" y="6" width="4" height="1" fill="#000000"/><rect x="10" y="6" width="3" height="1" fill="#000000"/><rect x="18" y="6" width="1" height="1" fill="#808080"/><rect x="19" y="6" width="1" height="1" fill="#ffffff"/><rect x="0" y="7" width="1" height="1" fill="#808080"/><rect x="1" y="7" width="1" height="1" fill="#ffffff"/><rect x="18" y="7" width="1" height="1" fill="#808080"/><rect x="19" y="7" width="1" height="1" fill="#ffffff"/><rect x="0" y="8" width="1" height="1" fill="#808080"/><rect x="1" y="8" width="1" height="1" fill="#ffffff"/><rect x="18" y="8" width="1" height="1" fill="#808080"/><rect x="19" y="8" width="1" height="1" fill="#ffffff"/><rect x="0" y="9" width="1" height="1" fill="#808080"/><rect x="1" y="9" width="1" height="1" fill="#ffffff"/><rect x="18" y="9" width="1" height="1" fill="#808080"/><rect x="19" y="9" width="1" height="1" fill="#ffffff"/><rect x="0" y="10" width="1" height="1" fill="#808080"/><rect x="1" y="10" width="1" height="1" fill="#ffffff"/><rect x="18" y="10" width="1" height="1" fill="#808080"/><rect x="19" y="10" width="1" height="1" fill="#ffffff"/><rect x="0" y="11" width="1" height="1" fill="#808080"/><rect x="1" y="11" width="1" height="1" fill="#ffffff"/><rect x="18" y="11" width="1" height="1" fill="#808080"/><rect x="19" y="11" width="1" height="1" fill="#ffffff"/><rect x="0" y="12" width="1" height="1" fill="#808080"/><rect x="1" y="12" width="1" height="1" fill="#ffffff"/><rect x="18" y="12" width="1" height="1" fill="#808080"/><rect x="19" y="12" width="1" height="1" fill="#ffffff"/><rect x="0" y="13" width="1" height="1" fill="#808080"/><rect x="1" y="13" width="1" height="1" fill="#ffffff"/><rect x="18" y="13" width="1" height="1" fill="#808080"/><rect x="19" y="13" width="1" height="1" fill="#ffffff"/><rect x="0" y="14" width="1" height="1" fill="#808080"/><rect x="1" y="14" width="1" height="1" fill="#ffffff"/><rect x="18" y="14" width="1" height="1" fill="#808080"/><rect x="19" y="14" width="1" height="1" fill="#ffffff"/><rect x="0" y="15" width="1" height="1" fill="#808080"/><rect x="1" y="15" width="1" height="1" fill="#ffffff"/><rect x="18" y="15" width="1" height="1" fill="#808080"/><rect x="19" y="15" width="1" height="1" fill="#ffffff"/><rect x="0" y="16" width="19" height="1" fill="#808080"/><rect x="19" y="16" width="1" height="1" fill="#ffffff"/><rect x="0" y="17" width="20" height="1" fill="#ffffff"/></svg>
<div style="left:421px;top:721px;width:20px;height:20px;background:#b4b4b4;"></div>
<svg style="position:absolute;left:421px;top:721px" width="20" height="20" shape-rendering="crispEdges"><rect x="3" y="3" width="12" height="1" fill="#808080"/><rect x="15" y="3" width="1" height="1" fill="#ffffff"/><rect x="3" y="4" width="1" height="1" fill="#808080"/><rect x="4" y="4" width="10" height="1" fill="#000000"/><rect x="14" y="4" width="1" height="1" fill="#d4d0c8"/><rect x="15" y="4" width="1" height="1" fill="#ffffff"/><rect x="3" y="5" width="1" height="1" fill="#808080"/><rect x="4" y="5" width="1" height="1" fill="#000000"/><rect x="5" y="5" width="9" height="1" fill="#e0e0e0"/><rect x="14" y="5" width="1" height="1" fill="#d4d0c8"/><rect x="15" y="5" width="1" height="1" fill="#ffffff"/><rect x="3" y="6" width="1" height="1" fill="#808080"/><rect x="4" y="6" width="1" height="1" fill="#000000"/><rect x="5" y="6" width="8" height="1" fill="#e0e0e0"/><rect x="13" y="6" width="1" height="1" fill="#000000"/><rect x="14" y="6" width="1" height="1" fill="#d4d0c8"/><rect x="15" y="6" width="1" height="1" fill="#ffffff"/><rect x="3" y="7" width="1" height="1" fill="#808080"/><rect x="4" y="7" width="1" height="1" fill="#000000"/><rect x="5" y="7" width="7" height="1" fill="#e0e0e0"/><rect x="12" y="7" width="2" height="1" fill="#000000"/><rect x="14" y="7" width="1" height="1" fill="#d4d0c8"/><rect x="15" y="7" width="1" height="1" fill="#ffffff"/><rect x="3" y="8" width="1" height="1" fill="#808080"/><rect x="4" y="8" width="1" height="1" fill="#000000"/><rect x="5" y="8" width="1" height="1" fill="#e0e0e0"/><rect x="6" y="8" width="1" height="1" fill="#000000"/><rect x="7" y="8" width="4" height="1" fill="#e0e0e0"/><rect x="11" y="8" width="3" height="1" fill="#000000"/><rect x="14" y="8" width="1" height="1" fill="#d4d0c8"/><rect x="15" y="8" width="1" height="1" fill="#ffffff"/><rect x="3" y="9" width="1" height="1" fill="#808080"/><rect x="4" y="9" width="1" height="1" fill="#000000"/><rect x="5" y="9" width="1" height="1" fill="#e0e0e0"/><rect x="6" y="9" width="2" height="1" fill="#000000"/><rect x="8" y="9" width="2" height="1" fill="#e0e0e0"/><rect x="10" y="9" width="3" height="1" fill="#000000"/><rect x="13" y="9" width="1" height="1" fill="#e0e0e0"/><rect x="14" y="9" width="1" height="1" fill="#d4d0c8"/><rect x="15" y="9" width="1" height="1" fill="#ffffff"/><rect x="3" y="10" width="1" height="1" fill="#808080"/><rect x="4" y="10" width="1" height="1" fill="#000000"/><rect x="5" y="10" width="1" height="1" fill="#e0e0e0"/><rect x="6" y="10" width="6" height="1" fill="#000000"/><rect x="12" y="10" width="2" height="1" fill="#e0e0e0"/><rect x="14" y="10" width="1" height="1" fill="#d4d0c8"/><rect x="15" y="10" width="1" height="1" fill="#ffffff"/><rect x="3" y="11" width="1" height="1" fill="#808080"/><rect x="4" y="11" width="1" height="1" fill="#000000"/><rect x="5" y="11" width="2" height="1" fill="#e0e0e0"/><rect x="7" y="11" width="4" height="1" fill="#000000"/><rect x="11" y="11" width="3" height="1" fill="#e0e0e0"/><rect x="14" y="11" width="1" height="1" fill="#d4d0c8"/><rect x="15" y="11" width="1" height="1" fill="#ffffff"/><rect x="3" y="12" width="1" height="1" fill="#808080"/><rect x="4" y="12" width="1" height="1" fill="#000000"/><rect x="5" y="12" width="3" height="1" fill="#e0e0e0"/><rect x="8" y="12" width="2" height="1" fill="#000000"/><rect x="10" y="12" width="4" height="1" fill="#e0e0e0"/><rect x="14" y="12" width="1" height="1" fill="#d4d0c8"/><rect x="15" y="12" width="1" height="1" fill="#ffffff"/><rect x="3" y="13" width="1" height="1" fill="#808080"/><rect x="4" y="13" width="1" height="1" fill="#000000"/><rect x="5" y="13" width="10" height="1" fill="#d4d0c8"/><rect x="15" y="13" width="1" height="1" fill="#ffffff"/><rect x="3" y="14" width="13" height="1" fill="#ffffff"/></svg>
<div style="left:448px;top:721px;width:20px;height:20px;background:#b4b4b4;"></div>
<svg style="position:absolute;left:448px;top:721px" width="20" height="20"><circle cx="10" cy="10" r="5.6" fill="#f0f0f0"/><path d="M6.04 13.96 A5.6 5.6 0 0 1 13.96 6.04" stroke="#000" stroke-width="1.4" fill="none"/><path d="M13.96 6.04 A5.6 5.6 0 0 1 6.04 13.96" stroke="#fff" stroke-width="1.4" fill="none"/><circle cx="10" cy="10" r="2.1" fill="#000"/></svg>
<div style="left:475px;top:721px;width:20px;height:20px;background:#b4b4b4;"></div>
<svg style="position:absolute;left:475px;top:721px" width="20" height="20" shape-rendering="crispEdges"><rect x="4" y="2" width="11" height="1" fill="#ffffff"/><rect x="15" y="2" width="1" height="1" fill="#000000"/><rect x="4" y="3" width="1" height="1" fill="#ffffff"/><rect x="5" y="3" width="9" height="1" fill="#c0c0c0"/><rect x="14" y="3" width="1" height="1" fill="#808080"/><rect x="15" y="3" width="1" height="1" fill="#000000"/><rect x="4" y="4" width="1" height="1" fill="#ffffff"/><rect x="5" y="4" width="9" height="1" fill="#c0c0c0"/><rect x="14" y="4" width="1" height="1" fill="#808080"/><rect x="15" y="4" width="1" height="1" fill="#000000"/><rect x="4" y="5" width="1" height="1" fill="#ffffff"/><rect x="5" y="5" width="4" height="1" fill="#c0c0c0"/><rect x="9" y="5" width="1" height="1" fill="#000000"/><rect x="10" y="5" width="4" height="1" fill="#c0c0c0"/><rect x="14" y="5" width="1" height="1" fill="#808080"/><rect x="15" y="5" width="1" height="1" fill="#000000"/><rect x="4" y="6" width="1" height="1" fill="#ffffff"/><rect x="5" y="6" width="3" height="1" fill="#c0c0c0"/><rect x="8" y="6" width="3" height="1" fill="#000000"/><rect x="11" y="6" width="3" height="1" fill="#c0c0c0"/><rect x="14" y="6" width="1" height="1" fill="#808080"/><rect x="15" y="6" width="1" height="1" fill="#000000"/><rect x="4" y="7" width="1" height="1" fill="#ffffff"/><rect x="5" y="7" width="2" height="1" fill="#c0c0c0"/><rect x="7" y="7" width="5" height="1" fill="#000000"/><rect x="12" y="7" width="2" height="1" fill="#c0c0c0"/><rect x="14" y="7" width="1" height="1" fill="#808080"/><rect x="15" y="7" width="1" height="1" fill="#000000"/><rect x="4" y="8" width="1" height="1" fill="#ffffff"/><rect x="5" y="8" width="9" height="1" fill="#c0c0c0"/><rect x="14" y="8" width="1" height="1" fill="#808080"/><rect x="15" y="8" width="1" height="1" fill="#000000"/><rect x="4" y="9" width="1" height="1" fill="#ffffff"/><rect x="5" y="9" width="10" height="1" fill="#808080"/><rect x="15" y="9" width="1" height="1" fill="#000000"/><rect x="4" y="10" width="11" height="1" fill="#ffffff"/><rect x="15" y="10" width="1" height="1" fill="#000000"/><rect x="4" y="11" width="1" height="1" fill="#ffffff"/><rect x="5" y="11" width="9" height="1" fill="#c0c0c0"/><rect x="14" y="11" width="1" height="1" fill="#808080"/><rect x="15" y="11" width="1" height="1" fill="#000000"/><rect x="4" y="12" width="1" height="1" fill="#ffffff"/><rect x="5" y="12" width="2" height="1" fill="#c0c0c0"/><rect x="7" y="12" width="5" height="1" fill="#000000"/><rect x="12" y="12" width="2" height="1" fill="#c0c0c0"/><rect x="14" y="12" width="1" height="1" fill="#808080"/><rect x="15" y="12" width="1" height="1" fill="#000000"/><rect x="4" y="13" width="1" height="1" fill="#ffffff"/><rect x="5" y="13" width="3" height="1" fill="#c0c0c0"/><rect x="8" y="13" width="3" height="1" fill="#000000"/><rect x="11" y="13" width="3" height="1" fill="#c0c0c0"/><rect x="14" y="13" width="1" height="1" fill="#808080"/><rect x="15" y="13" width="1" height="1" fill="#000000"/><rect x="4" y="14" width="1" height="1" fill="#ffffff"/><rect x="5" y="14" width="4" height="1" fill="#c0c0c0"/><rect x="9" y="14" width="1" height="1" fill="#000000"/><rect x="10" y="14" width="4" height="1" fill="#c0c0c0"/><rect x="14" y="14" width="1" height="1" fill="#808080"/><rect x="15" y="14" width="1" height="1" fill="#000000"/><rect x="4" y="15" width="1" height="1" fill="#ffffff"/><rect x="5" y="15" width="9" height="1" fill="#c0c0c0"/><rect x="14" y="15" width="1" height="1" fill="#808080"/><rect x="15" y="15" width="1" height="1" fill="#000000"/><rect x="4" y="16" width="1" height="1" fill="#ffffff"/><rect x="5" y="16" width="10" height="1" fill="#808080"/><rect x="15" y="16" width="1" height="1" fill="#000000"/><rect x="4" y="17" width="12" height="1" fill="#000000"/></svg>
<div style="left:502px;top:721px;width:20px;height:20px;background:#b4b4b4;"></div>
<svg style="position:absolute;left:502px;top:721px" width="20" height="20" shape-rendering="crispEdges"><rect x="1" y="5" width="17" height="1" fill="#808080"/><rect x="18" y="5" width="1" height="1" fill="#ffffff"/><rect x="1" y="6" width="1" height="1" fill="#808080"/><rect x="2" y="6" width="11" height="1" fill="#0000ff"/><rect x="13" y="6" width="2" height="1" fill="#ffffff"/><rect x="15" y="6" width="3" height="1" fill="#e0e0e0"/><rect x="18" y="6" width="1" height="1" fill="#ffffff"/><rect x="1" y="7" width="1" height="1" fill="#808080"/><rect x="2" y="7" width="2" height="1" fill="#0000ff"/><rect x="4" y="7" width="1" height="1" fill="#000000"/><rect x="5" y="7" width="2" height="1" fill="#0000ff"/><rect x="7" y="7" width="1" height="1" fill="#000000"/><rect x="8" y="7" width="2" height="1" fill="#0000ff"/><rect x="10" y="7" width="1" height="1" fill="#000000"/><rect x="11" y="7" width="2" height="1" fill="#0000ff"/><rect x="13" y="7" width="2" height="1" fill="#ffffff"/><rect x="15" y="7" width="1" height="1" fill="#000000"/><rect x="16" y="7" width="2" height="1" fill="#e0e0e0"/><rect x="18" y="7" width="1" height="1" fill="#ffffff"/><rect x="1" y="8" width="1" height="1" fill="#808080"/><rect x="2" y="8" width="2" height="1" fill="#0000ff"/><rect x="4" y="8" width="1" height="1" fill="#000000"/><rect x="5" y="8" width="2" height="1" fill="#0000ff"/><rect x="7" y="8" width="1" height="1" fill="#000000"/><rect x="8" y="8" width="2" height="1" fill="#0000ff"/><rect x="10" y="8" width="1" height="1" fill="#000000"/><rect x="11" y="8" width="2" height="1" fill="#0000ff"/><rect x="13" y="8" width="2" height="1" fill="#ffffff"/><rect x="15" y="8" width="1" height="1" fill="#000000"/><rect x="16" y="8" width="2" height="1" fill="#e0e0e0"/><rect x="18" y="8" width="1" height="1" fill="#ffffff"/><rect x="1" y="9" width="1" height="1" fill="#808080"/><rect x="2" y="9" width="2" height="1" fill="#0000ff"/><rect x="4" y="9" width="1" height="1" fill="#000000"/><rect x="5" y="9" width="2" height="1" fill="#0000ff"/><rect x="7" y="9" width="1" height="1" fill="#000000"/><rect x="8" y="9" width="2" height="1" fill="#0000ff"/><rect x="10" y="9" width="1" height="1" fill="#000000"/><rect x="11" y="9" width="2" height="1" fill="#0000ff"/><rect x="13" y="9" width="2" height="1" fill="#ffffff"/><rect x="15" y="9" width="1" height="1" fill="#000000"/><rect x="16" y="9" width="2" height="1" fill="#e0e0e0"/><rect x="18" y="9" width="1" height="1" fill="#ffffff"/><rect x="1" y="10" width="1" height="1" fill="#808080"/><rect x="2" y="10" width="2" height="1" fill="#0000ff"/><rect x="4" y="10" width="1" height="1" fill="#000000"/><rect x="5" y="10" width="2" height="1" fill="#0000ff"/><rect x="7" y="10" width="1" height="1" fill="#000000"/><rect x="8" y="10" width="2" height="1" fill="#0000ff"/><rect x="10" y="10" width="1" height="1" fill="#000000"/><rect x="11" y="10" width="2" height="1" fill="#0000ff"/><rect x="13" y="10" width="2" height="1" fill="#ffffff"/><rect x="15" y="10" width="1" height="1" fill="#000000"/><rect x="16" y="10" width="2" height="1" fill="#e0e0e0"/><rect x="18" y="10" width="1" height="1" fill="#ffffff"/><rect x="1" y="11" width="1" height="1" fill="#808080"/><rect x="2" y="11" width="2" height="1" fill="#0000ff"/><rect x="4" y="11" width="1" height="1" fill="#000000"/><rect x="5" y="11" width="2" height="1" fill="#0000ff"/><rect x="7" y="11" width="1" height="1" fill="#000000"/><rect x="8" y="11" width="2" height="1" fill="#0000ff"/><rect x="10" y="11" width="1" height="1" fill="#000000"/><rect x="11" y="11" width="2" height="1" fill="#0000ff"/><rect x="13" y="11" width="2" height="1" fill="#ffffff"/><rect x="15" y="11" width="1" height="1" fill="#000000"/><rect x="16" y="11" width="2" height="1" fill="#e0e0e0"/><rect x="18" y="11" width="1" height="1" fill="#ffffff"/><rect x="1" y="12" width="1" height="1" fill="#808080"/><rect x="2" y="12" width="2" height="1" fill="#0000ff"/><rect x="4" y="12" width="1" height="1" fill="#000000"/><rect x="5" y="12" width="2" height="1" fill="#0000ff"/><rect x="7" y="12" width="1" height="1" fill="#000000"/><rect x="8" y="12" width="2" height="1" fill="#0000ff"/><rect x="10" y="12" width="1" height="1" fill="#000000"/><rect x="11" y="12" width="2" height="1" fill="#0000ff"/><rect x="13" y="12" width="2" height="1" fill="#ffffff"/><rect x="15" y="12" width="1" height="1" fill="#000000"/><rect x="16" y="12" width="2" height="1" fill="#e0e0e0"/><rect x="18" y="12" width="1" height="1" fill="#ffffff"/><rect x="1" y="13" width="1" height="1" fill="#808080"/><rect x="2" y="13" width="11" height="1" fill="#0000ff"/><rect x="13" y="13" width="2" height="1" fill="#ffffff"/><rect x="15" y="13" width="3" height="1" fill="#e0e0e0"/><rect x="18" y="13" width="1" height="1" fill="#ffffff"/><rect x="1" y="14" width="18" height="1" fill="#ffffff"/></svg>
<div style="left:529px;top:721px;width:20px;height:20px;background:#b4b4b4;"></div>
<svg style="position:absolute;left:529px;top:721px" width="20" height="20" shape-rendering="crispEdges"><rect x="0" y="4" width="5" height="1" fill="#ffffff"/><rect x="0" y="5" width="1" height="1" fill="#ffffff"/><rect x="1" y="5" width="3" height="1" fill="#c0c0c0"/><rect x="4" y="5" width="1" height="1" fill="#808080"/><rect x="0" y="6" width="1" height="1" fill="#ffffff"/><rect x="1" y="6" width="3" height="1" fill="#c0c0c0"/><rect x="4" y="6" width="1" height="1" fill="#808080"/><rect x="5" y="6" width="1" height="1" fill="#000000"/><rect x="0" y="7" width="1" height="1" fill="#ffffff"/><rect x="1" y="7" width="3" height="1" fill="#c0c0c0"/><rect x="4" y="7" width="1" height="1" fill="#808080"/><rect x="5" y="7" width="1" height="1" fill="#000000"/><rect x="0" y="8" width="1" height="1" fill="#ffffff"/><rect x="1" y="8" width="3" height="1" fill="#c0c0c0"/><rect x="4" y="8" width="1" height="1" fill="#808080"/><rect x="5" y="8" width="13" height="1" fill="#000000"/><rect x="18" y="8" width="2" height="1" fill="#ffffff"/><rect x="0" y="9" width="1" height="1" fill="#ffffff"/><rect x="1" y="9" width="3" height="1" fill="#c0c0c0"/><rect x="4" y="9" width="1" height="1" fill="#808080"/><rect x="5" y="9" width="1" height="1" fill="#000000"/><rect x="18" y="9" width="1" height="1" fill="#808080"/><rect x="0" y="10" width="1" height="1" fill="#ffffff"/><rect x="1" y="10" width="3" height="1" fill="#c0c0c0"/><rect x="4" y="10" width="1" height="1" fill="#808080"/><rect x="5" y="10" width="1" height="1" fill="#000000"/><rect x="0" y="11" width="1" height="1" fill="#ffffff"/><rect x="1" y="11" width="3" height="1" fill="#c0c0c0"/><rect x="4" y="11" width="1" height="1" fill="#808080"/><rect x="0" y="12" width="1" height="1" fill="#ffffff"/><rect x="1" y="12" width="2" height="1" fill="#c0c0c0"/><rect x="3" y="12" width="1" height="1" fill="#808080"/><rect x="0" y="13" width="1" height="1" fill="#ffffff"/><rect x="1" y="13" width="1" height="1" fill="#c0c0c0"/><rect x="2" y="13" width="1" height="1" fill="#000000"/><rect x="3" y="13" width="1" height="1" fill="#808080"/><rect x="0" y="14" width="1" height="1" fill="#ffffff"/><rect x="1" y="14" width="1" height="1" fill="#000000"/><rect x="2" y="14" width="1" height="1" fill="#808080"/><rect x="0" y="15" width="2" height="1" fill="#000000"/></svg>
<div style="left:556px;top:721px;width:20px;height:20px;background:#b4b4b4;"></div>
<svg style="position:absolute;left:556px;top:721px" width="20" height="20"><circle cx="10" cy="10" r="8.3" fill="none" stroke="#000" stroke-width="1.2"/><circle cx="10" cy="10" r="6.8" fill="none" stroke="#000" stroke-width="1"/><circle cx="15.20" cy="10.00" r="0.6" fill="#000"/><circle cx="14.50" cy="12.60" r="0.6" fill="#000"/><circle cx="12.60" cy="14.50" r="0.6" fill="#000"/><circle cx="10.00" cy="15.20" r="0.6" fill="#000"/><circle cx="7.40" cy="14.50" r="0.6" fill="#000"/><circle cx="5.50" cy="12.60" r="0.6" fill="#000"/><circle cx="4.80" cy="10.00" r="0.6" fill="#000"/><circle cx="5.50" cy="7.40" r="0.6" fill="#000"/><circle cx="7.40" cy="5.50" r="0.6" fill="#000"/><circle cx="10.00" cy="4.80" r="0.6" fill="#000"/><circle cx="12.60" cy="5.50" r="0.6" fill="#000"/><circle cx="14.50" cy="7.40" r="0.6" fill="#000"/><path d="M10 10 L13 7" stroke="#000" stroke-width="1"/></svg>
<div style="left:583px;top:721px;width:20px;height:20px;background:#b4b4b4;"></div>
<svg style="position:absolute;left:583px;top:721px" width="20" height="20" shape-rendering="crispEdges"><rect x="1" y="1" width="1" height="1" fill="#000000"/><rect x="3" y="1" width="1" height="1" fill="#000000"/><rect x="5" y="1" width="1" height="1" fill="#000000"/><rect x="7" y="1" width="1" height="1" fill="#000000"/><rect x="9" y="1" width="1" height="1" fill="#000000"/><rect x="11" y="1" width="1" height="1" fill="#000000"/><rect x="13" y="1" width="1" height="1" fill="#000000"/><rect x="15" y="1" width="1" height="1" fill="#000000"/><rect x="17" y="1" width="1" height="1" fill="#000000"/><rect x="1" y="3" width="1" height="1" fill="#000000"/><rect x="3" y="3" width="1" height="1" fill="#000000"/><rect x="5" y="3" width="1" height="1" fill="#000000"/><rect x="7" y="3" width="1" height="1" fill="#000000"/><rect x="9" y="3" width="1" height="1" fill="#000000"/><rect x="11" y="3" width="1" height="1" fill="#000000"/><rect x="13" y="3" width="1" height="1" fill="#000000"/><rect x="15" y="3" width="1" height="1" fill="#000000"/><rect x="17" y="3" width="1" height="1" fill="#000000"/><rect x="1" y="5" width="1" height="1" fill="#000000"/><rect x="3" y="5" width="1" height="1" fill="#000000"/><rect x="5" y="5" width="1" height="1" fill="#000000"/><rect x="7" y="5" width="1" height="1" fill="#000000"/><rect x="9" y="5" width="1" height="1" fill="#000000"/><rect x="11" y="5" width="1" height="1" fill="#000000"/><rect x="13" y="5" width="1" height="1" fill="#000000"/><rect x="15" y="5" width="1" height="1" fill="#000000"/><rect x="17" y="5" width="1" height="1" fill="#000000"/><rect x="1" y="7" width="1" height="1" fill="#000000"/><rect x="3" y="7" width="1" height="1" fill="#000000"/><rect x="5" y="7" width="1" height="1" fill="#000000"/><rect x="7" y="7" width="1" height="1" fill="#000000"/><rect x="9" y="7" width="1" height="1" fill="#000000"/><rect x="11" y="7" width="1" height="1" fill="#000000"/><rect x="13" y="7" width="1" height="1" fill="#000000"/><rect x="15" y="7" width="1" height="1" fill="#000000"/><rect x="17" y="7" width="1" height="1" fill="#000000"/><rect x="1" y="9" width="1" height="1" fill="#000000"/><rect x="3" y="9" width="1" height="1" fill="#000000"/><rect x="5" y="9" width="15" height="1" fill="#000000"/><rect x="5" y="10" width="15" height="1" fill="#000000"/><rect x="1" y="11" width="1" height="1" fill="#000000"/><rect x="3" y="11" width="1" height="1" fill="#000000"/><rect x="5" y="11" width="2" height="1" fill="#000000"/><rect x="7" y="11" width="2" height="1" fill="#ffffff"/><rect x="9" y="11" width="2" height="1" fill="#000000"/><rect x="11" y="11" width="1" height="1" fill="#ffffff"/><rect x="12" y="11" width="3" height="1" fill="#000000"/><rect x="15" y="11" width="3" height="1" fill="#ffffff"/><rect x="18" y="11" width="2" height="1" fill="#000000"/><rect x="5" y="12" width="1" height="1" fill="#000000"/><rect x="6" y="12" width="1" height="1" fill="#ffffff"/><rect x="7" y="12" width="2" height="1" fill="#000000"/><rect x="9" y="12" width="1" height="1" fill="#ffffff"/><rect x="10" y="12" width="1" height="1" fill="#000000"/><rect x="11" y="12" width="1" height="1" fill="#ffffff"/><rect x="12" y="12" width="3" height="1" fill="#000000"/><rect x="15" y="12" width="1" height="1" fill="#ffffff"/><rect x="16" y="12" width="4" height="1" fill="#000000"/><rect x="1" y="13" width="1" height="1" fill="#000000"/><rect x="3" y="13" width="1" height="1" fill="#000000"/><rect x="5" y="13" width="1" height="1" fill="#000000"/><rect x="6" y="13" width="1" height="1" fill="#ffffff"/><rect x="7" y="13" width="2" height="1" fill="#000000"/><rect x="9" y="13" width="1" height="1" fill="#ffffff"/><rect x="10" y="13" width="1" height="1" fill="#000000"/><rect x="11" y="13" width="1" height="1" fill="#ffffff"/><rect x="12" y="13" width="3" height="1" fill="#000000"/><rect x="15" y="13" width="2" height="1" fill="#ffffff"/><rect x="17" y="13" width="3" height="1" fill="#000000"/><rect x="5" y="14" width="1" height="1" fill="#000000"/><rect x="6" y="14" width="1" height="1" fill="#ffffff"/><rect x="7" y="14" width="2" height="1" fill="#000000"/><rect x="9" y="14" width="1" height="1" fill="#ffffff"/><rect x="10" y="14" width="1" height="1" fill="#000000"/><rect x="11" y="14" width="1" height="1" fill="#ffffff"/><rect x="12" y="14" width="3" height="1" fill="#000000"/><rect x="15" y="14" width="1" height="1" fill="#ffffff"/><rect x="16" y="14" width="4" height="1" fill="#000000"/><rect x="1" y="15" width="1" height="1" fill="#000000"/><rect x="3" y="15" width="1" height="1" fill="#000000"/><rect x="5" y="15" width="1" height="1" fill="#000000"/><rect x="6" y="15" width="1" height="1" fill="#ffffff"/><rect x="7" y="15" width="2" height="1" fill="#000000"/><rect x="9" y="15" width="1" height="1" fill="#ffffff"/><rect x="10" y="15" width="1" height="1" fill="#000000"/><rect x="11" y="15" width="1" height="1" fill="#ffffff"/><rect x="12" y="15" width="3" height="1" fill="#000000"/><rect x="15" y="15" width="1" height="1" fill="#ffffff"/><rect x="16" y="15" width="4" height="1" fill="#000000"/><rect x="5" y="16" width="2" height="1" fill="#000000"/><rect x="7" y="16" width="2" height="1" fill="#ffffff"/><rect x="9" y="16" width="2" height="1" fill="#000000"/><rect x="11" y="16" width="3" height="1" fill="#ffffff"/><rect x="14" y="16" width="1" height="1" fill="#000000"/><rect x="15" y="16" width="3" height="1" fill="#ffffff"/><rect x="18" y="16" width="2" height="1" fill="#000000"/><rect x="1" y="17" width="1" height="1" fill="#000000"/><rect x="3" y="17" width="1" height="1" fill="#000000"/><rect x="5" y="17" width="15" height="1" fill="#000000"/><rect x="5" y="18" width="15" height="1" fill="#000000"/><rect x="5" y="19" width="15" height="1" fill="#000000"/></svg>
<div style="left:610px;top:721px;width:20px;height:20px;background:#b4b4b4;"></div>
<svg style="position:absolute;left:610px;top:721px" width="20" height="20" shape-rendering="crispEdges"><rect x="6" y="4" width="7" height="1" fill="#000000"/><rect x="5" y="5" width="9" height="1" fill="#000000"/><rect x="4" y="6" width="11" height="1" fill="#000000"/><rect x="4" y="7" width="4" height="1" fill="#000000"/><rect x="8" y="7" width="5" height="1" fill="#c0c0c0"/><rect x="13" y="7" width="2" height="1" fill="#000000"/><rect x="4" y="8" width="5" height="1" fill="#000000"/><rect x="9" y="8" width="3" height="1" fill="#c0c0c0"/><rect x="12" y="8" width="2" height="1" fill="#000000"/><rect x="14" y="8" width="1" height="1" fill="#c0c0c0"/><rect x="15" y="8" width="1" height="1" fill="#000000"/><rect x="4" y="9" width="5" height="1" fill="#000000"/><rect x="9" y="9" width="3" height="1" fill="#c0c0c0"/><rect x="12" y="9" width="1" height="1" fill="#000000"/><rect x="13" y="9" width="1" height="1" fill="#c0c0c0"/><rect x="14" y="9" width="2" height="1" fill="#000000"/><rect x="4" y="10" width="6" height="1" fill="#000000"/><rect x="10" y="10" width="5" height="1" fill="#c0c0c0"/><rect x="15" y="10" width="2" height="1" fill="#000000"/><rect x="5" y="11" width="5" height="1" fill="#000000"/><rect x="10" y="11" width="4" height="1" fill="#c0c0c0"/><rect x="14" y="11" width="2" height="1" fill="#000000"/><rect x="6" y="12" width="5" height="1" fill="#000000"/><rect x="11" y="12" width="3" height="1" fill="#c0c0c0"/><rect x="14" y="12" width="1" height="1" fill="#000000"/><rect x="6" y="13" width="3" height="1" fill="#000000"/><rect x="9" y="13" width="1" height="1" fill="#c0c0c0"/><rect x="10" y="13" width="5" height="1" fill="#000000"/><rect x="7" y="14" width="2" height="1" fill="#000000"/><rect x="9" y="14" width="4" height="1" fill="#c0c0c0"/><rect x="13" y="14" width="2" height="1" fill="#000000"/><rect x="6" y="15" width="9" height="1" fill="#000000"/></svg>
<div style="left:33px;top:745px;width:689px;height:1px;background:#808080;"></div>
<div style="left:33px;top:746px;width:689px;height:1px;background:#fff;"></div>
<div style="left:33px;top:747px;width:689px;height:18px;background:#b9b9b9;"></div>
<div class="t" style="left:33.5px;top:751.69px;font-size:11px;color:#000;font-weight:400;">Ready</div>
<div style="left:490px;top:749px;width:106px;height:16px;background:#fff;"></div>
<div style="left:490px;top:749px;width:105px;height:15px;background:#808080;"></div>
<div style="left:491px;top:750px;width:104px;height:14px;background:#b9b9b9;"></div>
<svg style="position:absolute;left:492px;top:749px" width="15" height="14" shape-rendering="crispEdges"><rect x="5" y="1" width="1" height="1" fill="#000000"/><rect x="5" y="2" width="1" height="1" fill="#000000"/><rect x="5" y="3" width="1" height="1" fill="#000000"/><rect x="1" y="5" width="3" height="1" fill="#000000"/><rect x="5" y="5" width="1" height="1" fill="#000000"/><rect x="7" y="5" width="3" height="1" fill="#000000"/><rect x="11" y="5" width="1" height="1" fill="#000000"/><rect x="13" y="5" width="1" height="1" fill="#000000"/><rect x="5" y="7" width="1" height="1" fill="#000000"/><rect x="13" y="7" width="1" height="1" fill="#000000"/><rect x="5" y="8" width="1" height="1" fill="#000000"/><rect x="5" y="9" width="1" height="1" fill="#000000"/><rect x="13" y="9" width="1" height="1" fill="#000000"/><rect x="5" y="11" width="1" height="1" fill="#000000"/><rect x="13" y="11" width="1" height="1" fill="#000000"/><rect x="5" y="13" width="1" height="1" fill="#000000"/><rect x="7" y="13" width="1" height="1" fill="#000000"/><rect x="9" y="13" width="1" height="1" fill="#000000"/><rect x="11" y="13" width="1" height="1" fill="#000000"/><rect x="13" y="13" width="1" height="1" fill="#000000"/></svg>
<div class="t" style="left:512px;top:751.69px;font-size:11px;color:#000;font-weight:400;">246, 432</div>
<div style="left:598px;top:749px;width:106px;height:16px;background:#fff;"></div>
<div style="left:598px;top:749px;width:105px;height:15px;background:#808080;"></div>
<div style="left:599px;top:750px;width:104px;height:14px;background:#b9b9b9;"></div>
<svg style="position:absolute;left:600px;top:749px" width="15" height="14" shape-rendering="crispEdges"><rect x="5" y="1" width="1" height="1" fill="#000000"/><rect x="7" y="1" width="4" height="1" fill="#000000"/><rect x="12" y="1" width="1" height="1" fill="#000000"/><rect x="5" y="2" width="1" height="1" fill="#000000"/><rect x="10" y="2" width="3" height="1" fill="#000000"/><rect x="5" y="3" width="1" height="1" fill="#000000"/><rect x="12" y="3" width="1" height="1" fill="#000000"/><rect x="1" y="5" width="3" height="1" fill="#000000"/><rect x="5" y="5" width="1" height="1" fill="#000000"/><rect x="7" y="5" width="1" height="1" fill="#000000"/><rect x="9" y="5" width="1" height="1" fill="#000000"/><rect x="11" y="5" width="1" height="1" fill="#000000"/><rect x="13" y="5" width="1" height="1" fill="#000000"/><rect x="2" y="7" width="1" height="1" fill="#000000"/><rect x="5" y="7" width="1" height="1" fill="#000000"/><rect x="13" y="7" width="1" height="1" fill="#000000"/><rect x="2" y="8" width="1" height="1" fill="#000000"/><rect x="2" y="9" width="1" height="1" fill="#000000"/><rect x="5" y="9" width="1" height="1" fill="#000000"/><rect x="13" y="9" width="1" height="1" fill="#000000"/><rect x="2" y="10" width="1" height="1" fill="#000000"/><rect x="1" y="11" width="2" height="1" fill="#000000"/><rect x="5" y="11" width="1" height="1" fill="#000000"/><rect x="13" y="11" width="1" height="1" fill="#000000"/><rect x="2" y="12" width="1" height="1" fill="#000000"/><rect x="1" y="13" width="3" height="1" fill="#000000"/><rect x="5" y="13" width="1" height="1" fill="#000000"/><rect x="7" y="13" width="1" height="1" fill="#000000"/><rect x="9" y="13" width="1" height="1" fill="#000000"/><rect x="11" y="13" width="1" height="1" fill="#000000"/><rect x="13" y="13" width="1" height="1" fill="#000000"/></svg>
<div class="t" style="left:620px;top:751.69px;font-size:11px;color:#000;font-weight:400;letter-spacing:-0.15px">250 x 525</div>
<div style="left:706px;top:750px;width:16px;height:15px;background:#d4d0c8;"></div>
<svg style="position:absolute;left:708px;top:751px" width="13" height="13" shape-rendering="crispEdges"><rect x="12" y="1" width="1" height="1" fill="#fff"/><rect x="11" y="2" width="1" height="1" fill="#fff"/><rect x="12" y="2" width="1" height="1" fill="#808080"/><rect x="10" y="3" width="1" height="1" fill="#fff"/><rect x="11" y="3" width="1" height="1" fill="#808080"/><rect x="12" y="3" width="1" height="1" fill="#808080"/><rect x="9" y="4" width="1" height="1" fill="#fff"/><rect x="10" y="4" width="1" height="1" fill="#808080"/><rect x="11" y="4" width="1" height="1" fill="#808080"/><rect x="8" y="5" width="1" height="1" fill="#fff"/><rect x="9" y="5" width="1" height="1" fill="#808080"/><rect x="10" y="5" width="1" height="1" fill="#808080"/><rect x="12" y="5" width="1" height="1" fill="#fff"/><rect x="7" y="6" width="1" height="1" fill="#fff"/><rect x="8" y="6" width="1" height="1" fill="#808080"/><rect x="9" y="6" width="1" height="1" fill="#808080"/><rect x="11" y="6" width="1" height="1" fill="#fff"/><rect x="12" y="6" width="1" height="1" fill="#808080"/><rect x="6" y="7" width="1" height="1" fill="#fff"/><rect x="7" y="7" width="1" height="1" fill="#808080"/><rect x="8" y="7" width="1" height="1" fill="#808080"/><rect x="10" y="7" width="1" height="1" fill="#fff"/><rect x="11" y="7" width="1" height="1" fill="#808080"/><rect x="12" y="7" width="1" height="1" fill="#808080"/><rect x="5" y="8" width="1" height="1" fill="#fff"/><rect x="6" y="8" width="1" height="1" fill="#808080"/><rect x="7" y="8" width="1" height="1" fill="#808080"/><rect x="9" y="8" width="1" height="1" fill="#fff"/><rect x="10" y="8" width="1" height="1" fill="#808080"/><rect x="11" y="8" width="1" height="1" fill="#808080"/><rect x="4" y="9" width="1" height="1" fill="#fff"/><rect x="5" y="9" width="1" height="1" fill="#808080"/><rect x="6" y="9" width="1" height="1" fill="#808080"/><rect x="8" y="9" width="1" height="1" fill="#fff"/><rect x="9" y="9" width="1" height="1" fill="#808080"/><rect x="10" y="9" width="1" height="1" fill="#808080"/><rect x="12" y="9" width="1" height="1" fill="#fff"/><rect x="3" y="10" width="1" height="1" fill="#fff"/><rect x="4" y="10" width="1" height="1" fill="#808080"/><rect x="5" y="10" width="1" height="1" fill="#808080"/><rect x="7" y="10" width="1" height="1" fill="#fff"/><rect x="8" y="10" width="1" height="1" fill="#808080"/><rect x="9" y="10" width="1" height="1" fill="#808080"/><rect x="11" y="10" width="1" height="1" fill="#fff"/><rect x="12" y="10" width="1" height="1" fill="#808080"/><rect x="2" y="11" width="1" height="1" fill="#fff"/><rect x="3" y="11" width="1" height="1" fill="#808080"/><rect x="4" y="11" width="1" height="1" fill="#808080"/><rect x="6" y="11" width="1" height="1" fill="#fff"/><rect x="7" y="11" width="1" height="1" fill="#808080"/><rect x="8" y="11" width="1" height="1" fill="#808080"/><rect x="10" y="11" width="1" height="1" fill="#fff"/><rect x="11" y="11" width="1" height="1" fill="#808080"/><rect x="12" y="11" width="1" height="1" fill="#808080"/><rect x="1" y="12" width="1" height="1" fill="#fff"/><rect x="2" y="12" width="1" height="1" fill="#808080"/><rect x="3" y="12" width="1" height="1" fill="#808080"/><rect x="5" y="12" width="1" height="1" fill="#fff"/><rect x="6" y="12" width="1" height="1" fill="#808080"/><rect x="7" y="12" width="1" height="1" fill="#808080"/><rect x="9" y="12" width="1" height="1" fill="#fff"/><rect x="10" y="12" width="1" height="1" fill="#808080"/><rect x="11" y="12" width="1" height="1" fill="#808080"/></svg>
</body></html>
